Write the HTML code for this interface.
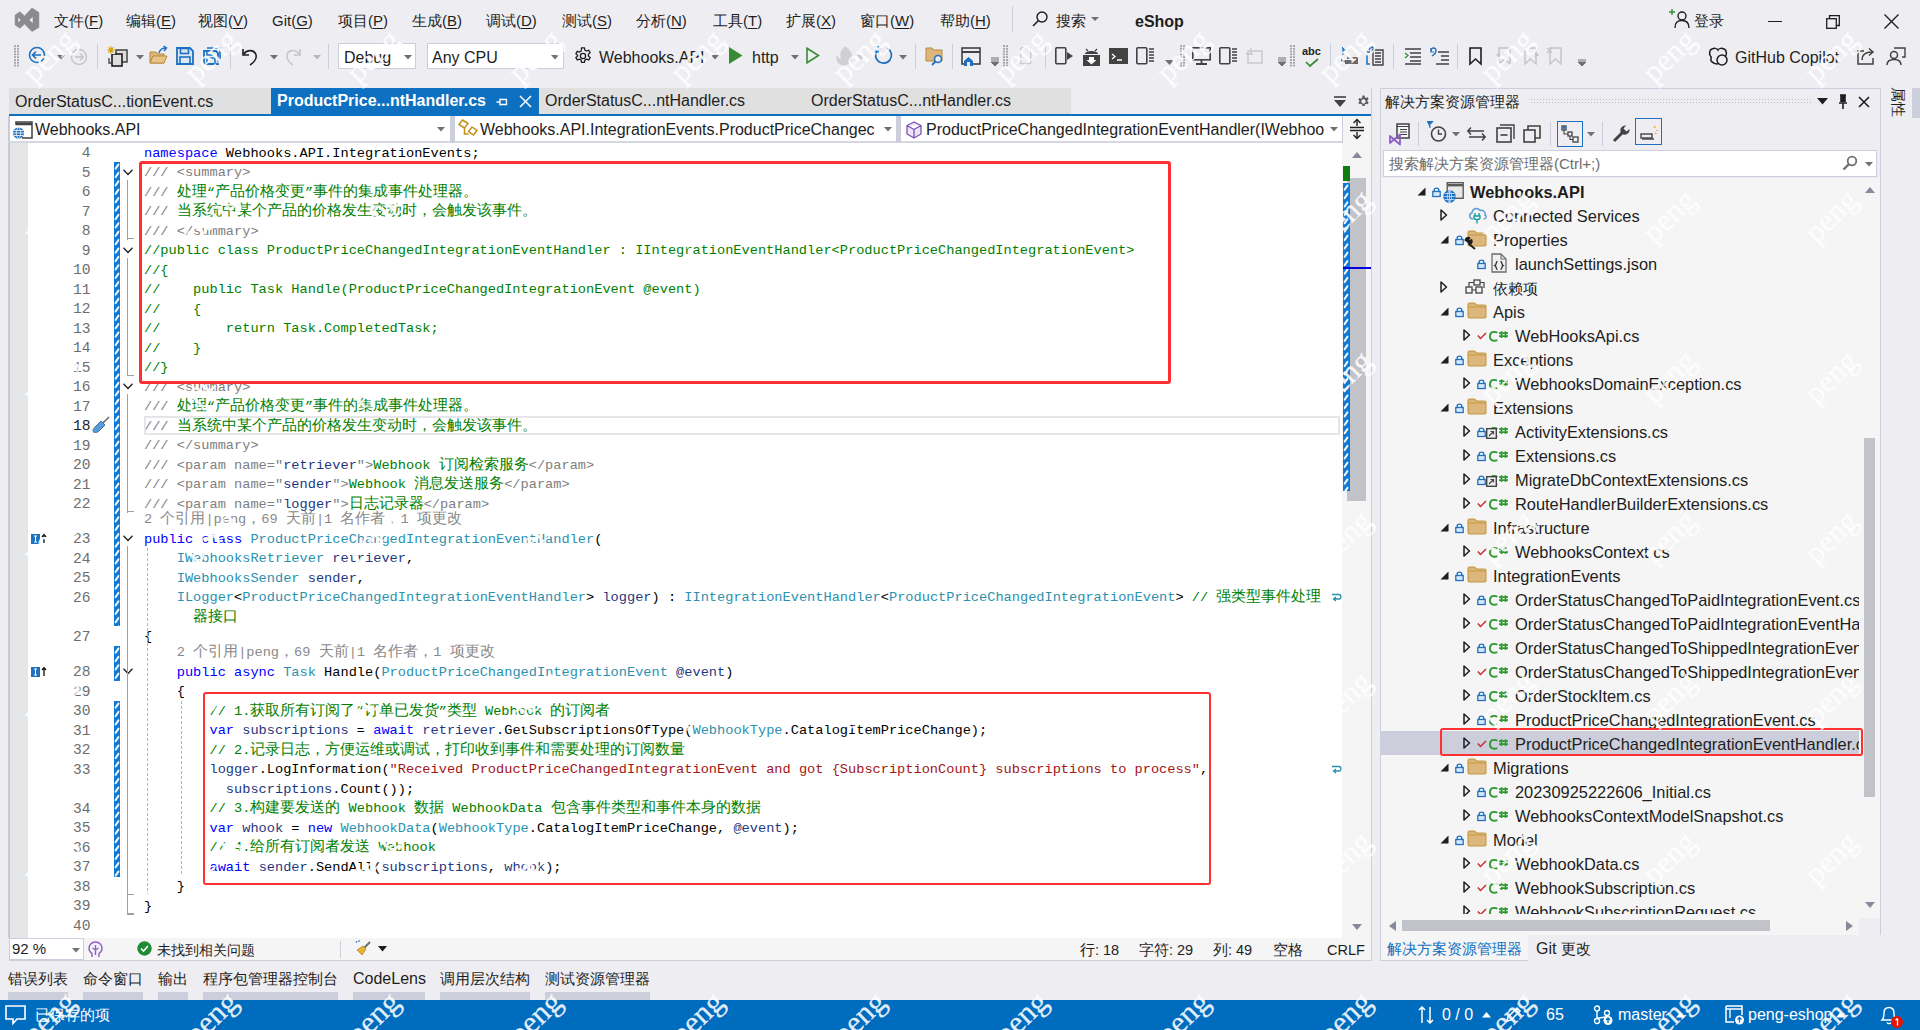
<!DOCTYPE html><html><head><meta charset="utf-8"><style>
html,body{margin:0;padding:0}
body{width:1920px;height:1030px;overflow:hidden;position:relative;background:#eeeef2;font-family:"Liberation Sans",sans-serif;color:#1e1e1e}
.code{position:absolute;white-space:pre;font-family:"Liberation Mono",monospace;font-size:13.65px;line-height:19.5px;color:#000}
.k{color:#0000ff}.t{color:#2b91af}.c{color:#008000}.g{color:#808080}.s{color:#a31515}.p{color:#1f377f}
.cl{position:absolute;white-space:pre;font-family:"Liberation Mono",monospace;font-size:13.65px;line-height:15px;color:#8a8a8a}
.ln{position:absolute;left:40px;width:50.5px;text-align:right;font-family:"Liberation Mono",monospace;font-size:14.6px;line-height:19.5px;color:#6e6e6e}
.tr{position:absolute;white-space:pre;font-size:16.4px;line-height:24px;color:#1e1e1e}
svg{position:absolute;overflow:visible}
</style></head><body>

<svg style="left:14px;top:7px" width="26" height="26"><path d="M1.1 8 L6 4.8 L10.6 9 L18 1 L24.9 5.5 V20.5 L18 24.6 L10.6 17 L6 21.2 L1.1 18 Z M4 10 L7 13 L4 16 Z M19 9.5 L15 13 L19 16.5 Z" fill="#8b8b8f" fill-rule="evenodd" stroke="#8b8b8f" stroke-width="0.6" stroke-linejoin="round"/></svg>
<div style="position:absolute;left:54px;top:10px;white-space:pre;font-size:15px;line-height:22px;color:#1e1e1e"><span style="font-size:15px">文件</span>(<span style="text-decoration:underline;text-underline-offset:2px">F</span>)</div>
<div style="position:absolute;left:126px;top:10px;white-space:pre;font-size:15px;line-height:22px;color:#1e1e1e"><span style="font-size:15px">编辑</span>(<span style="text-decoration:underline;text-underline-offset:2px">E</span>)</div>
<div style="position:absolute;left:198px;top:10px;white-space:pre;font-size:15px;line-height:22px;color:#1e1e1e"><span style="font-size:15px">视图</span>(<span style="text-decoration:underline;text-underline-offset:2px">V</span>)</div>
<div style="position:absolute;left:272px;top:10px;white-space:pre;font-size:15px;line-height:22px;color:#1e1e1e">Git(<span style="text-decoration:underline;text-underline-offset:2px">G</span>)</div>
<div style="position:absolute;left:338px;top:10px;white-space:pre;font-size:15px;line-height:22px;color:#1e1e1e"><span style="font-size:15px">项目</span>(<span style="text-decoration:underline;text-underline-offset:2px">P</span>)</div>
<div style="position:absolute;left:412px;top:10px;white-space:pre;font-size:15px;line-height:22px;color:#1e1e1e"><span style="font-size:15px">生成</span>(<span style="text-decoration:underline;text-underline-offset:2px">B</span>)</div>
<div style="position:absolute;left:486px;top:10px;white-space:pre;font-size:15px;line-height:22px;color:#1e1e1e"><span style="font-size:15px">调试</span>(<span style="text-decoration:underline;text-underline-offset:2px">D</span>)</div>
<div style="position:absolute;left:562px;top:10px;white-space:pre;font-size:15px;line-height:22px;color:#1e1e1e"><span style="font-size:15px">测试</span>(<span style="text-decoration:underline;text-underline-offset:2px">S</span>)</div>
<div style="position:absolute;left:636px;top:10px;white-space:pre;font-size:15px;line-height:22px;color:#1e1e1e"><span style="font-size:15px">分析</span>(<span style="text-decoration:underline;text-underline-offset:2px">N</span>)</div>
<div style="position:absolute;left:713px;top:10px;white-space:pre;font-size:15px;line-height:22px;color:#1e1e1e"><span style="font-size:15px">工具</span>(<span style="text-decoration:underline;text-underline-offset:2px">T</span>)</div>
<div style="position:absolute;left:786px;top:10px;white-space:pre;font-size:15px;line-height:22px;color:#1e1e1e"><span style="font-size:15px">扩展</span>(<span style="text-decoration:underline;text-underline-offset:2px">X</span>)</div>
<div style="position:absolute;left:860px;top:10px;white-space:pre;font-size:15px;line-height:22px;color:#1e1e1e"><span style="font-size:15px">窗口</span>(<span style="text-decoration:underline;text-underline-offset:2px">W</span>)</div>
<div style="position:absolute;left:940px;top:10px;white-space:pre;font-size:15px;line-height:22px;color:#1e1e1e"><span style="font-size:15px">帮助</span>(<span style="text-decoration:underline;text-underline-offset:2px">H</span>)</div>
<div style="position:absolute;left:1012px;top:6px;width:1px;height:26px;background:#cccedb"></div>
<svg style="left:1032px;top:11px" width="16" height="16"><circle cx="10" cy="6" r="5" fill="none" stroke="#1e1e1e" stroke-width="1.4"/><path d="M6.5 9.5 L1 15" stroke="#1e1e1e" stroke-width="1.6"/></svg>
<div style="position:absolute;left:1056px;top:10px;white-space:pre;font-size:15px;line-height:22px;color:#1e1e1e;"><span style="font-size:15px">搜索</span></div>
<svg style="left:1091px;top:17px" width="8" height="5"><path d="M0 0H8L4 4Z" fill="#717171"/></svg>
<div style="position:absolute;left:1135px;top:11px;white-space:pre;font-size:16px;line-height:22px;color:#1e1e1e;font-weight:bold">eShop</div>
<svg style="left:1669px;top:9px" width="22" height="20"><path d="M3 0V6M0 3H6" stroke="#388a34" stroke-width="1.4"/><circle cx="13" cy="7" r="4" fill="none" stroke="#1e1e1e" stroke-width="1.4"/><path d="M6 19 C6 13 9 11.5 13 11.5 C17 11.5 20 13 20 19" fill="none" stroke="#1e1e1e" stroke-width="1.4"/></svg>
<div style="position:absolute;left:1694px;top:10px;white-space:pre;font-size:15px;line-height:22px;color:#1e1e1e;"><span style="font-size:15px">登录</span></div>
<div style="position:absolute;left:1768px;top:21px;width:14px;height:1.3px;background:#1e1e1e"></div>
<svg style="left:1826px;top:15px" width="14" height="14"><rect x="0.7" y="3.7" width="9.6" height="9.6" fill="none" stroke="#1e1e1e" stroke-width="1.3"/><path d="M3.5 3.5V0.7H13.3V10.5H10.5" fill="none" stroke="#1e1e1e" stroke-width="1.3"/></svg>
<svg style="left:1884px;top:14px" width="15" height="15"><path d="M0.5 0.5L14.5 14.5M14.5 0.5L0.5 14.5" stroke="#1e1e1e" stroke-width="1.4"/></svg>
<div style="position:absolute;left:14px;top:45px;width:6px;height:22px;background-image:radial-gradient(circle at 1px 1px,#a0a0a8 0.7px,transparent 1px);background-size:3px 2.8px"></div>
<svg style="left:28px;top:46px" width="18" height="18"><circle cx="9" cy="9" r="7.5" fill="none" stroke="#1f70c1" stroke-width="1.6"/><path d="M13 9H5M8 5.5L4.5 9L8 12.5" fill="none" stroke="#1f70c1" stroke-width="1.6"/></svg>
<svg style="left:57px;top:55px" width="8" height="5"><path d="M0 0H8L4 4.5Z" fill="#717171"/></svg>
<svg style="left:70px;top:48px" width="18" height="18"><circle cx="9" cy="9" r="7.5" fill="none" stroke="#c4c4c8" stroke-width="1.4"/><path d="M5 9H13M10 5.5L13.5 9L10 12.5" fill="none" stroke="#c4c4c8" stroke-width="1.4"/></svg>
<div style="position:absolute;left:97px;top:44px;width:1px;height:25px;background:#cccedb"></div>
<svg style="left:107px;top:46px" width="22" height="21"><rect x="9" y="4" width="11" height="12" fill="#dedede" stroke="#424242" stroke-width="1.5"/><rect x="5" y="8" width="10" height="12" fill="#dedede" stroke="#1e1e1e" stroke-width="1.6"/><path d="M2 12V17H5" fill="none" stroke="#424242" stroke-width="1.3"/><rect x="0" y="0" width="8" height="8" fill="#eeeef2"/><path d="M4 0.3V7.7M0.3 4H7.7M1.4 1.4L6.6 6.6M6.6 1.4L1.4 6.6" stroke="#d9a400" stroke-width="1.2"/></svg>
<svg style="left:136px;top:55px" width="8" height="5"><path d="M0 0H8L4 4.5Z" fill="#717171"/></svg>
<svg style="left:149px;top:46px" width="19" height="19"><path d="M1 6H7L9 8H15V17H1Z" fill="#dcb67a" stroke="#b48a3e" stroke-width="1"/><path d="M1 17L4 10H18L15 17Z" fill="#e8c486" stroke="#b48a3e" stroke-width="1"/><path d="M10 7 C11 3 14 2 17 2M14.5 0L17.5 2L15 5" fill="none" stroke="#1f70c1" stroke-width="1.5"/></svg>
<svg style="left:176px;top:47px" width="18" height="18"><path d="M1 1H14L17 4V17H1Z" fill="#dce7f4" stroke="#1f70c1" stroke-width="1.8"/><rect x="4.5" y="1.5" width="8" height="5" fill="none" stroke="#1f70c1" stroke-width="1.6"/><rect x="4" y="10" width="10" height="7" fill="none" stroke="#1f70c1" stroke-width="1.6"/></svg>
<svg style="left:203px;top:47px" width="19" height="18"><path d="M4 1H17V14" fill="none" stroke="#1f70c1" stroke-width="1.6"/><path d="M1 4H13L15 6V17H1Z" fill="#dce7f4" stroke="#1f70c1" stroke-width="1.8"/><rect x="4" y="11" width="8" height="6" fill="none" stroke="#1f70c1" stroke-width="1.5"/><rect x="4" y="4.5" width="6" height="3.5" fill="none" stroke="#1f70c1" stroke-width="1.4"/></svg>
<div style="position:absolute;left:230px;top:44px;width:1px;height:25px;background:#cccedb"></div>
<svg style="left:240px;top:46px" width="18" height="20"><path d="M3 3V9H9" fill="none" stroke="#1e1e1e" stroke-width="1.6"/><path d="M3.5 8.5 C6 4 13 3 15.5 7.5 C17.5 11.5 14.5 16 10 19" fill="none" stroke="#1e1e1e" stroke-width="1.6"/></svg>
<svg style="left:270px;top:55px" width="8" height="5"><path d="M0 0H8L4 4.5Z" fill="#717171"/></svg>
<svg style="left:285px;top:46px" width="18" height="20"><path d="M15 3V9H9" fill="none" stroke="#c4c4c8" stroke-width="1.5"/><path d="M14.5 8.5 C12 4 5 3 2.5 7.5 C0.5 11.5 3.5 16 8 19" fill="none" stroke="#c4c4c8" stroke-width="1.5"/></svg>
<svg style="left:313px;top:55px" width="8" height="5"><path d="M0 0H8L4 4.5Z" fill="#b8b8bc"/></svg>
<div style="position:absolute;left:328px;top:44px;width:1px;height:25px;background:#cccedb"></div>
<div style="position:absolute;left:338px;top:43px;width:78px;height:26px;background:#fff;border:1px solid #cccedb;box-sizing:border-box"></div>
<div style="position:absolute;left:344px;top:46.5px;white-space:pre;font-size:16px;line-height:22px;color:#1e1e1e;">Debug</div>
<svg style="left:404px;top:55px" width="8" height="5"><path d="M0 0H8L4 4.5Z" fill="#717171"/></svg>
<div style="position:absolute;left:427px;top:43px;width:137px;height:26px;background:#fff;border:1px solid #cccedb;box-sizing:border-box"></div>
<div style="position:absolute;left:432px;top:46.5px;white-space:pre;font-size:16px;line-height:22px;color:#1e1e1e;">Any CPU</div>
<svg style="left:551px;top:55px" width="8" height="5"><path d="M0 0H8L4 4.5Z" fill="#717171"/></svg>
<svg style="left:574px;top:47px" width="18" height="18" viewBox="0 0 18 18"><path d="M7.6 0.8h2.8l0.5 2.3 1.6 0.9 2.2-0.8 1.4 2.4-1.7 1.6v1.7l1.7 1.6-1.4 2.4-2.2-0.8-1.6 0.9-0.5 2.3H7.6l-0.5-2.3-1.6-0.9-2.2 0.8-1.4-2.4 1.7-1.6V8.3L1.9 6.7l1.4-2.4 2.2 0.8 1.6-0.9z" fill="none" stroke="#1e1e1e" stroke-width="1.3"/><circle cx="9" cy="9" r="2.6" fill="none" stroke="#1e1e1e" stroke-width="1.3"/></svg>
<div style="position:absolute;left:599px;top:46.5px;white-space:pre;font-size:16px;line-height:22px;color:#1e1e1e;">Webhooks.API</div>
<svg style="left:711px;top:55px" width="8" height="5"><path d="M0 0H8L4 4.5Z" fill="#717171"/></svg>
<svg style="left:729px;top:47px" width="14" height="17"><path d="M0 0L13.5 8.5L0 17Z" fill="#388a34"/></svg>
<div style="position:absolute;left:752px;top:46.5px;white-space:pre;font-size:16px;line-height:22px;color:#1e1e1e;">http</div>
<svg style="left:791px;top:55px" width="8" height="5"><path d="M0 0H8L4 4.5Z" fill="#717171"/></svg>
<svg style="left:806px;top:47px" width="14" height="17"><path d="M1 1.2L12.5 8.5L1 15.8Z" fill="none" stroke="#388a34" stroke-width="1.6"/></svg>
<svg style="left:833px;top:45px" width="24" height="22"><path d="M12 1 C16 4 20 8 19 14 C18 19 13 21 9 20 C4 19 2 14 4 10 C5 13 7 14 8 13 C6 8 9 4 12 1Z" fill="#d0d0d4"/></svg>
<svg style="left:857px;top:55px" width="8" height="5"><path d="M0 0H8L4 4.5Z" fill="#c4c4c8"/></svg>
<svg style="left:873px;top:45px" width="20" height="20"><path d="M6 3.5 A8 8 0 1 0 14.5 3.2" fill="none" stroke="#1f70c1" stroke-width="1.7"/><path d="M3 1L7.5 3.5L4.5 7.5" fill="none" stroke="#1f70c1" stroke-width="1.7"/></svg>
<svg style="left:899px;top:55px" width="8" height="5"><path d="M0 0H8L4 4.5Z" fill="#717171"/></svg>
<div style="position:absolute;left:915px;top:44px;width:1px;height:25px;background:#cccedb"></div>
<svg style="left:925px;top:46px" width="20" height="20"><path d="M1 2H7L9 4H17V15H1Z" fill="#dcb67a" stroke="#b48a3e" stroke-width="1"/><circle cx="13" cy="13" r="3.5" fill="#eeeef2" stroke="#1f70c1" stroke-width="1.6"/><path d="M10.5 15.5L7 19" stroke="#1f70c1" stroke-width="1.8"/></svg>
<div style="position:absolute;left:952px;top:44px;width:1px;height:25px;background:#cccedb"></div>
<svg style="left:961px;top:47px" width="20" height="20"><rect x="1" y="1" width="18" height="16" fill="none" stroke="#424242" stroke-width="1.6"/><path d="M1 5H19" stroke="#424242" stroke-width="2"/><path d="M3 14L7.5 10L12 14V19H3Z" fill="#1f70c1"/><rect x="6" y="15" width="3" height="4" fill="#eeeef2"/></svg>
<svg style="left:990px;top:58px" width="10" height="8"><path d="M1 0H9M1 2H9M1 4H9L5 8Z" stroke="#717171" fill="#717171" stroke-width="1"/></svg>
<div style="position:absolute;left:1003px;top:45px;width:6px;height:22px;background-image:radial-gradient(circle at 1px 1px,#a0a0a8 0.7px,transparent 1px);background-size:3px 2.8px"></div>
<svg style="left:1020px;top:47px" width="12" height="18"><rect x="0.7" y="0.7" width="10" height="16" rx="1" fill="none" stroke="#c8c8cc" stroke-width="1.3"/></svg>
<div style="position:absolute;left:1045px;top:44px;width:1px;height:25px;background:#cccedb"></div>
<svg style="left:1055px;top:47px" width="18" height="18"><rect x="0.8" y="0.8" width="10" height="16" rx="1" fill="none" stroke="#424242" stroke-width="1.6"/><path d="M12 5L18 9L12 13Z" fill="#424242"/></svg>
<svg style="left:1082px;top:46px" width="19" height="20"><path d="M4 3L6 5M15 3L13 5" stroke="#424242" stroke-width="1.2"/><path d="M3 8 C3 4 16 4 16 8Z" fill="#424242"/><rect x="1" y="9" width="17" height="11" fill="#424242"/><path d="M7 11H12V14H14.5L9.5 18.5L4.5 14H7Z" fill="#fff"/></svg>
<svg style="left:1109px;top:48px" width="19" height="16"><rect x="0" y="0" width="19" height="16" fill="#424242"/><path d="M3 6L6 8.5L3 11M8 12H13" stroke="#fff" stroke-width="1.3" fill="none"/></svg>
<svg style="left:1136px;top:47px" width="19" height="18"><rect x="0.8" y="0.8" width="10" height="16" rx="1" fill="none" stroke="#424242" stroke-width="1.6"/><path d="M13 2H18M13 5H18M13 8H18M13 11H18M13 14H18" stroke="#424242" stroke-width="1.3"/></svg>
<svg style="left:1165px;top:60px" width="10" height="8"><path d="M0 0H9L4.5 5Z" fill="#717171"/></svg>
<div style="position:absolute;left:1180px;top:45px;width:6px;height:22px;background-image:radial-gradient(circle at 1px 1px,#a0a0a8 0.7px,transparent 1px);background-size:3px 2.8px"></div>
<svg style="left:1192px;top:47px" width="19" height="18"><rect x="0.8" y="0.8" width="17.4" height="12" fill="none" stroke="#424242" stroke-width="1.6"/><path d="M9.5 13V16M4 17H15" stroke="#424242" stroke-width="1.8"/></svg>
<svg style="left:1219px;top:47px" width="19" height="18"><rect x="0.8" y="0.8" width="10" height="16" rx="1" fill="none" stroke="#424242" stroke-width="1.6"/><path d="M13 2H18M13 5H18M13 8H18M13 11H18M13 14H18" stroke="#424242" stroke-width="1.3"/></svg>
<svg style="left:1245px;top:47px" width="20" height="18"><rect x="3" y="4" width="14" height="12" fill="none" stroke="#c8c8cc" stroke-width="1.4"/><path d="M1 7H8M6 1V6" stroke="#c8c8cc" stroke-width="1.4"/></svg>
<svg style="left:1277px;top:58px" width="10" height="8"><path d="M1 0H9M1 2H9M1 4H9L5 8Z" stroke="#717171" fill="#717171" stroke-width="1"/></svg>
<div style="position:absolute;left:1290px;top:45px;width:6px;height:22px;background-image:radial-gradient(circle at 1px 1px,#a0a0a8 0.7px,transparent 1px);background-size:3px 2.8px"></div>
<div style="position:absolute;left:1302px;top:44px;white-space:pre;font-size:11px;line-height:14px;color:#1e1e1e;font-weight:bold">abc</div>
<svg style="left:1305px;top:58px" width="14" height="9"><path d="M1 4L5 8L13 1" fill="none" stroke="#388a34" stroke-width="1.7"/></svg>
<div style="position:absolute;left:1330px;top:44px;width:1px;height:25px;background:#cccedb"></div>
<svg style="left:1338px;top:46px" width="21" height="20"><path d="M4 1L7.5 5H5V9" fill="#1f70c1" stroke="#1f70c1" stroke-width="1"/><path d="M4 11V15H19V12H9" fill="none" stroke="#424242" stroke-width="1.6"/><path d="M7 17H20" stroke="#424242" stroke-width="1.6"/></svg>
<svg style="left:1365px;top:46px" width="20" height="20"><path d="M5 6H2V18H5" fill="none" stroke="#1f70c1" stroke-width="1.5"/><path d="M4 4 C5 1 8 1 9 3M7 0.5L9.5 3L6.5 4.5" fill="none" stroke="#1f70c1" stroke-width="1.3"/><path d="M8 4H18V19H8Z M10 7H16M10 10H16M10 13H16M10 16H16" fill="none" stroke="#424242" stroke-width="1.4"/></svg>
<div style="position:absolute;left:1393px;top:44px;width:1px;height:25px;background:#cccedb"></div>
<svg style="left:1404px;top:47px" width="18" height="18"><path d="M1 2H17M6 6H17M6 10H17M6 14H17M1 17H17" stroke="#424242" stroke-width="1.3"/><path d="M1 6L4 8.5L1 11" fill="none" stroke="#388a34" stroke-width="1.3"/></svg>
<svg style="left:1430px;top:46px" width="20" height="19"><path d="M1 5 C1 1 6 1 6 5 C6 8 3 9 2 10" fill="none" stroke="#1f70c1" stroke-width="1.4"/><path d="M1 2V6H4" fill="none" stroke="#1f70c1" stroke-width="1.2"/><path d="M8 6H19M11 10H19M11 14H19M6 18H19" stroke="#424242" stroke-width="1.3"/></svg>
<div style="position:absolute;left:1457px;top:44px;width:1px;height:25px;background:#cccedb"></div>
<svg style="left:1469px;top:47px" width="13" height="18"><path d="M1 1H12V17L6.5 12L1 17Z" fill="none" stroke="#1e1e1e" stroke-width="1.6"/></svg>
<svg style="left:1496px;top:47px" width="15" height="18"><path d="M3 1H14V17L8.5 12L3 17Z" fill="none" stroke="#c4c4c8" stroke-width="1.4"/><path d="M0 8L4 5V11Z" fill="#c4c4c8"/></svg>
<svg style="left:1524px;top:47px" width="15" height="18"><path d="M1 1H12V17L6.5 12L1 17Z" fill="none" stroke="#c4c4c8" stroke-width="1.4"/><path d="M15 8L11 5V11Z" fill="#c4c4c8"/></svg>
<svg style="left:1547px;top:47px" width="15" height="18"><path d="M3 1H14V17L8.5 12L3 17Z" fill="none" stroke="#c4c4c8" stroke-width="1.4"/><path d="M0 1L5 6M5 1L0 6" stroke="#c4c4c8" stroke-width="1.3"/></svg>
<svg style="left:1577px;top:60px" width="10" height="8"><path d="M1 0H9M1 2H9L5 6Z" stroke="#717171" fill="#717171" stroke-width="1"/></svg>
<svg style="left:1708px;top:46px" width="20" height="20"><path d="M3 10 C1 10 1 4 4 3 C6 2 9 2 10 4 C11 2 14 2 16 3 C19 4 19 10 17 10" fill="none" stroke="#1e1e1e" stroke-width="1.5"/><path d="M3 10V15 C6 18 10 18 10 18" fill="none" stroke="#1e1e1e" stroke-width="1.5"/><circle cx="14" cy="14" r="5" fill="#eeeef2" stroke="#1e1e1e" stroke-width="1.5"/></svg>
<div style="position:absolute;left:1735px;top:46.5px;white-space:pre;font-size:16px;line-height:22px;color:#1e1e1e;">GitHub Copilot</div>
<svg style="left:1857px;top:47px" width="19" height="18"><path d="M7 4H1V17H16V11" fill="none" stroke="#424242" stroke-width="1.5"/><path d="M5 13 C5 7 9 5 15 5M12 1.5L16 5L12 8.5" fill="none" stroke="#424242" stroke-width="1.5"/></svg>
<svg style="left:1886px;top:46px" width="20" height="20"><path d="M8 2H19V11H16" fill="none" stroke="#424242" stroke-width="1.4"/><circle cx="8" cy="9" r="3.5" fill="none" stroke="#424242" stroke-width="1.5"/><path d="M1 19 C1 15 4 13.5 8 13.5 C12 13.5 15 15 15 19" fill="none" stroke="#424242" stroke-width="1.5"/></svg>
<div style="position:absolute;left:9px;top:88px;width:1062px;height:26px;background:#e0e0e0"></div>
<div style="position:absolute;left:271px;top:88px;width:268px;height:26px;background:#0e70c0"></div>
<div style="position:absolute;left:15px;top:90.5px;white-space:pre;font-size:16px;line-height:22px;color:#1e1e1e;">OrderStatusC...tionEvent.cs</div>
<div style="position:absolute;left:277px;top:90px;white-space:pre;font-size:16px;line-height:22px;color:#fff;font-weight:bold">ProductPrice...ntHandler.cs</div>
<svg style="left:496px;top:96px" width="12" height="12"><path d="M0.5 6H4M4 2.5V9.5M4 3.5H10.5V8.5H4" fill="none" stroke="#fff" stroke-width="1.3"/></svg>
<svg style="left:519px;top:95px" width="13" height="13"><path d="M1 1L12 12M12 1L1 12" stroke="#fff" stroke-width="1.5"/></svg>
<div style="position:absolute;left:545px;top:90px;white-space:pre;font-size:16px;line-height:22px;color:#1e1e1e;">OrderStatusC...ntHandler.cs</div>
<div style="position:absolute;left:811px;top:90px;white-space:pre;font-size:16px;line-height:22px;color:#1e1e1e;">OrderStatusC...ntHandler.cs</div>
<svg style="left:1334px;top:96px" width="12" height="12"><path d="M0 1H12" stroke="#424242" stroke-width="1.6"/><path d="M0 4H12L6 11Z" fill="#424242"/></svg>
<svg style="left:1357px;top:95px" width="13" height="13" viewBox="0 0 18 18"><path d="M7.6 0.8h2.8l0.5 2.3 1.6 0.9 2.2-0.8 1.4 2.4-1.7 1.6v1.7l1.7 1.6-1.4 2.4-2.2-0.8-1.6 0.9-0.5 2.3H7.6l-0.5-2.3-1.6-0.9-2.2 0.8-1.4-2.4 1.7-1.6V8.3L1.9 6.7l1.4-2.4 2.2 0.8 1.6-0.9z" fill="#5a5a5a"/><circle cx="9" cy="9" r="3" fill="#eeeef2"/></svg>
<div style="position:absolute;left:9px;top:114px;width:1362px;height:2px;background:#0e70c0"></div>
<div style="position:absolute;left:9px;top:116px;width:1362px;height:27px;background:#fff"></div>
<div style="position:absolute;left:8px;top:116px;width:1.5px;height:27px;background:#c8cad8"></div>
<div style="position:absolute;left:9px;top:141px;width:1362px;height:2px;background:#d6d7e0"></div>
<div style="position:absolute;left:450px;top:116px;width:5px;height:27px;background:#cccedb"></div>
<div style="position:absolute;left:896px;top:116px;width:5px;height:27px;background:#cccedb"></div>
<div style="position:absolute;left:1342px;top:116px;width:29px;height:27px;background:#f5f5f5;border-left:1px solid #cccedb;box-sizing:border-box"></div>
<svg style="left:12px;top:120px" width="22" height="20"><path d="M4 5V2H20V18H10" fill="none" stroke="#424242" stroke-width="1.5"/><path d="M4 4H20" stroke="#424242" stroke-width="2.5"/><circle cx="6.5" cy="13" r="5.5" fill="#1f70c1"/><path d="M1 13H12M6.5 7.5 C3.5 10 3.5 16 6.5 18.5M6.5 7.5 C9.5 10 9.5 16 6.5 18.5M2 10.5H11M2 15.5H11" fill="none" stroke="#fff" stroke-width="0.8"/></svg>
<div style="position:absolute;left:35px;top:119px;white-space:pre;font-size:16px;line-height:22px;color:#1e1e1e;">Webhooks.API</div>
<svg style="left:437px;top:127px" width="8" height="5"><path d="M0 0H8L4 4.5Z" fill="#717171"/></svg>
<svg style="left:458px;top:119px" width="20" height="20"><path d="M4.5 1L10 4.5L6.5 9L1 5.5Z M14 8L19 11.5L15.5 16L10.5 12.5Z" fill="none" stroke="#c19016" stroke-width="1.5"/><path d="M6.5 9V15H10.5" fill="none" stroke="#c19016" stroke-width="1.5"/></svg>
<div style="position:absolute;left:480px;top:119px;white-space:pre;font-size:16px;line-height:22px;color:#1e1e1e;">Webhooks.API.IntegrationEvents.ProductPriceChangec</div>
<svg style="left:884px;top:127px" width="8" height="5"><path d="M0 0H8L4 4.5Z" fill="#717171"/></svg>
<svg style="left:906px;top:121px" width="16" height="18"><path d="M8 1L15 4.5V13L8 17L1 13V4.5Z M1 4.5L8 8.5L15 4.5M8 8.5V17" fill="#ede4f7" stroke="#7b53b5" stroke-width="1.3" stroke-linejoin="round"/></svg>
<div style="position:absolute;left:926px;top:119px;width:398px;overflow:hidden;white-space:pre;font-size:16px;line-height:22px">ProductPriceChangedIntegrationEventHandler(IWebhooksRetriever</div>
<svg style="left:1330px;top:127px" width="8" height="5"><path d="M0 0H8L4 4.5Z" fill="#717171"/></svg>
<svg style="left:1350px;top:119px" width="14" height="20"><path d="M0 8.5H14M0 11.5H14" stroke="#1e1e1e" stroke-width="1.6"/><path d="M7 1V7M7 13V19" stroke="#1e1e1e" stroke-width="1.4"/><path d="M3.5 4L7 0.5L10.5 4M3.5 16L7 19.5L10.5 16" fill="none" stroke="#1e1e1e" stroke-width="1.4"/></svg>
<div style="position:absolute;left:9px;top:143px;width:1334px;height:795px;background:#fff"></div>
<div style="position:absolute;left:9px;top:143px;width:19px;height:795px;background:#e4e6e7"></div>
<div style="position:absolute;left:8px;top:143px;width:1.5px;height:795px;background:#c8cad8"></div>
<div style="position:absolute;left:1371px;top:88px;width:1px;height:873px;background:#cccedb"></div>
<div style="position:absolute;left:1342px;top:143px;width:29px;height:795px;background:#f5f5f5"></div>
<svg style="left:1352px;top:152px" width="10" height="6"><path d="M0 6L5 0L10 6Z" fill="#868999"/></svg>
<svg style="left:1352px;top:924px" width="10" height="6"><path d="M0 0L5 6L10 0Z" fill="#868999"/></svg>
<div style="position:absolute;left:1347px;top:178px;width:19px;height:322.5px;background:#c2c3c9"></div>
<div style="position:absolute;left:1343px;top:166px;width:7px;height:15px;background:#107c10"></div>
<svg width="0" height="0" style="position:absolute;left:0;top:0"><defs><pattern id="st" width="7" height="8.4" patternUnits="userSpaceOnUse"><rect width="7" height="8.4" fill="#0e78d4"/><path d="M1.6 6.6L4.5 2.4" stroke="#fff" stroke-width="1.9" stroke-linecap="round"/></pattern></defs></svg>
<svg style="left:1343px;top:183px" width="7" height="308"><rect width="7" height="308" fill="url(#st)"/></svg>
<div style="position:absolute;left:1343px;top:267px;width:28px;height:2px;background:#0000e0"></div>
<div class="ln" style="top:144.00px;">4</div>
<div class="code" style="left:144px;top:143.50px"><span class="k">namespace</span> Webhooks.API.IntegrationEvents;</div>
<div class="ln" style="top:163.50px;">5</div>
<div class="code" style="left:144px;top:163.00px"><span class="g">/// &lt;summary&gt;</span></div>
<div class="ln" style="top:183.00px;">6</div>
<div class="code" style="left:144px;top:182.50px"><span class="g">/// </span><span class="c"><span style="font-size:14.85px">处理</span>“<span style="font-size:14.85px">产品价格变更</span>”<span style="font-size:14.85px">事件的集成事件处理器。</span></span></div>
<div class="ln" style="top:202.50px;">7</div>
<div class="code" style="left:144px;top:202.00px"><span class="g">/// </span><span class="c"><span style="font-size:14.85px">当系统中某个产品的价格发生变动时，会触发该事件。</span></span></div>
<div class="ln" style="top:222.00px;">8</div>
<div class="code" style="left:144px;top:221.50px"><span class="g">/// &lt;/summary&gt;</span></div>
<div class="ln" style="top:241.50px;">9</div>
<div class="code" style="left:144px;top:241.00px"><span class="c">//public class ProductPriceChangedIntegrationEventHandler : IIntegrationEventHandler&lt;ProductPriceChangedIntegrationEvent&gt;</span></div>
<div class="ln" style="top:261.00px;">10</div>
<div class="code" style="left:144px;top:260.50px"><span class="c">//{</span></div>
<div class="ln" style="top:280.50px;">11</div>
<div class="code" style="left:144px;top:280.00px"><span class="c">//    public Task Handle(ProductPriceChangedIntegrationEvent @event)</span></div>
<div class="ln" style="top:300.00px;">12</div>
<div class="code" style="left:144px;top:299.50px"><span class="c">//    {</span></div>
<div class="ln" style="top:319.50px;">13</div>
<div class="code" style="left:144px;top:319.00px"><span class="c">//        return Task.CompletedTask;</span></div>
<div class="ln" style="top:339.00px;">14</div>
<div class="code" style="left:144px;top:338.50px"><span class="c">//    }</span></div>
<div class="ln" style="top:358.50px;">15</div>
<div class="code" style="left:144px;top:358.00px"><span class="c">//}</span></div>
<div class="ln" style="top:378.00px;">16</div>
<div class="code" style="left:144px;top:377.50px"><span class="g">/// &lt;summary&gt;</span></div>
<div class="ln" style="top:397.50px;">17</div>
<div class="code" style="left:144px;top:397.00px"><span class="g">/// </span><span class="c"><span style="font-size:14.85px">处理</span>“<span style="font-size:14.85px">产品价格变更</span>”<span style="font-size:14.85px">事件的集成事件处理器。</span></span></div>
<div class="ln" style="top:417.00px;color:#1e1e1e;">18</div>
<div class="code" style="left:144px;top:416.50px"><span class="g">/// </span><span class="c"><span style="font-size:14.85px">当系统中某个产品的价格发生变动时，会触发该事件。</span></span></div>
<div class="ln" style="top:436.50px;">19</div>
<div class="code" style="left:144px;top:436.00px"><span class="g">/// &lt;/summary&gt;</span></div>
<div class="ln" style="top:456.00px;">20</div>
<div class="code" style="left:144px;top:455.50px"><span class="g">/// &lt;param name=&quot;</span><span class="p">retriever</span><span class="g">&quot;&gt;</span><span class="c">Webhook <span style="font-size:14.85px">订阅检索服务</span></span><span class="g">&lt;/param&gt;</span></div>
<div class="ln" style="top:475.50px;">21</div>
<div class="code" style="left:144px;top:475.00px"><span class="g">/// &lt;param name=&quot;</span><span class="p">sender</span><span class="g">&quot;&gt;</span><span class="c">Webhook <span style="font-size:14.85px">消息发送服务</span></span><span class="g">&lt;/param&gt;</span></div>
<div class="ln" style="top:495.00px;">22</div>
<div class="code" style="left:144px;top:494.50px"><span class="g">/// &lt;param name=&quot;</span><span class="p">logger</span><span class="g">&quot;&gt;</span><span class="c"><span style="font-size:14.85px">日志记录器</span></span><span class="g">&lt;/param&gt;</span></div>
<div class="cl" style="left:144.00px;top:512.00px">2 <span style="font-size:14.5px">个引用</span>|peng<span style="font-size:14.5px">，</span>69 <span style="font-size:14.5px">天前</span>|1 <span style="font-size:14.5px">名作者，</span>1 <span style="font-size:14.5px">项更改</span></div>
<div class="ln" style="top:530.30px;">23</div>
<div class="code" style="left:144px;top:529.80px"><span class="k">public class</span> <span class="t">ProductPriceChangedIntegrationEventHandler</span>(</div>
<div class="ln" style="top:549.80px;">24</div>
<div class="code" style="left:144px;top:549.30px">    <span class="t">IWebhooksRetriever</span> <span class="p">retriever</span>,</div>
<div class="ln" style="top:569.30px;">25</div>
<div class="code" style="left:144px;top:568.80px">    <span class="t">IWebhooksSender</span> <span class="p">sender</span>,</div>
<div class="ln" style="top:588.80px;">26</div>
<div class="code" style="left:144px;top:588.30px">    <span class="t">ILogger</span>&lt;<span class="t">ProductPriceChangedIntegrationEventHandler</span>&gt; <span class="p">logger</span>) : <span class="t">IIntegrationEventHandler</span>&lt;<span class="t">ProductPriceChangedIntegrationEvent</span>&gt; <span class="c">// <span style="font-size:14.85px">强类型事件处理</span></span></div>
<div class="code" style="left:144px;top:607.80px">      <span class="c"><span style="font-size:14.85px">器接口</span></span></div>
<div class="ln" style="top:627.80px;">27</div>
<div class="code" style="left:144px;top:627.30px">{</div>
<div class="cl" style="left:176.76px;top:644.80px">2 <span style="font-size:14.5px">个引用</span>|peng<span style="font-size:14.5px">，</span>69 <span style="font-size:14.5px">天前</span>|1 <span style="font-size:14.5px">名作者，</span>1 <span style="font-size:14.5px">项更改</span></div>
<div class="ln" style="top:663.10px;">28</div>
<div class="code" style="left:144px;top:662.60px">    <span class="k">public async</span> <span class="t">Task</span> Handle(<span class="t">ProductPriceChangedIntegrationEvent</span> <span class="p">@event</span>)</div>
<div class="ln" style="top:682.60px;">29</div>
<div class="code" style="left:144px;top:682.10px">    {</div>
<div class="ln" style="top:702.10px;">30</div>
<div class="code" style="left:144px;top:701.60px">        <span class="c">// 1.<span style="font-size:14.85px">获取所有订阅了</span>“<span style="font-size:14.85px">订单已发货</span>”<span style="font-size:14.85px">类型</span> Webhook <span style="font-size:14.85px">的订阅者</span></span></div>
<div class="ln" style="top:721.60px;">31</div>
<div class="code" style="left:144px;top:721.10px">        <span class="k">var</span> <span class="p">subscriptions</span> = <span class="k">await</span> <span class="p">retriever</span>.GetSubscriptionsOfType(<span class="t">WebhookType</span>.CatalogItemPriceChange);</div>
<div class="ln" style="top:741.10px;">32</div>
<div class="code" style="left:144px;top:740.60px">        <span class="c">// 2.<span style="font-size:14.85px">记录日志，方便运维或调试，打印收到事件和需要处理的订阅数量</span></span></div>
<div class="ln" style="top:760.60px;">33</div>
<div class="code" style="left:144px;top:760.10px">        <span class="p">logger</span>.LogInformation(<span class="s">&quot;Received ProductPriceChangedIntegrationEvent and got {SubscriptionCount} subscriptions to process&quot;</span>,</div>
<div class="code" style="left:144px;top:779.60px">          <span class="p">subscriptions</span>.Count());</div>
<div class="ln" style="top:799.60px;">34</div>
<div class="code" style="left:144px;top:799.10px">        <span class="c">// 3.<span style="font-size:14.85px">构建要发送的</span> Webhook <span style="font-size:14.85px">数据</span> WebhookData <span style="font-size:14.85px">包含事件类型和事件本身的数据</span></span></div>
<div class="ln" style="top:819.10px;">35</div>
<div class="code" style="left:144px;top:818.60px">        <span class="k">var</span> <span class="p">whook</span> = <span class="k">new</span> <span class="t">WebhookData</span>(<span class="t">WebhookType</span>.CatalogItemPriceChange, <span class="p">@event</span>);</div>
<div class="ln" style="top:838.60px;">36</div>
<div class="code" style="left:144px;top:838.10px">        <span class="c">// 4.<span style="font-size:14.85px">给所有订阅者发送</span> Webhook</span></div>
<div class="ln" style="top:858.10px;">37</div>
<div class="code" style="left:144px;top:857.60px">        <span class="k">await</span> <span class="p">sender</span>.SendAll(<span class="p">subscriptions</span>, <span class="p">whook</span>);</div>
<div class="ln" style="top:877.60px;">38</div>
<div class="code" style="left:144px;top:877.10px">    }</div>
<div class="ln" style="top:897.10px;">39</div>
<div class="code" style="left:144px;top:896.60px">}</div>
<div class="ln" style="top:916.60px;">40</div>
<div class="code" style="left:144px;top:916.10px"></div>
<div style="position:absolute;left:144px;top:415.5px;width:1196px;height:19.5px;border:2px solid #e6e6ea;box-sizing:border-box"></div>
<svg style="left:114px;top:162px" width="6" height="464"><rect width="6" height="464" fill="url(#st)"/></svg>
<svg style="left:114px;top:646px" width="6" height="35"><rect width="6" height="35" fill="url(#st)"/></svg>
<svg style="left:114px;top:700.5px" width="6" height="176"><rect width="6" height="176" fill="url(#st)"/></svg>
<svg style="left:123px;top:168.5px" width="10" height="7"><path d="M0.5 0.8L5 5.5L9.5 0.8" fill="none" stroke="#1e1e1e" stroke-width="1.3"/></svg>
<svg style="left:123px;top:246.5px" width="10" height="7"><path d="M0.5 0.8L5 5.5L9.5 0.8" fill="none" stroke="#1e1e1e" stroke-width="1.3"/></svg>
<svg style="left:123px;top:383.0px" width="10" height="7"><path d="M0.5 0.8L5 5.5L9.5 0.8" fill="none" stroke="#1e1e1e" stroke-width="1.3"/></svg>
<svg style="left:123px;top:535.3px" width="10" height="7"><path d="M0.5 0.8L5 5.5L9.5 0.8" fill="none" stroke="#1e1e1e" stroke-width="1.3"/></svg>
<svg style="left:123px;top:668.1px" width="10" height="7"><path d="M0.5 0.8L5 5.5L9.5 0.8" fill="none" stroke="#1e1e1e" stroke-width="1.3"/></svg>
<div style="position:absolute;left:127px;top:179.5px;width:1.3px;height:60.0px;background:#a0a0a0"></div>
<div style="position:absolute;left:127px;top:238.2px;width:7px;height:1.3px;background:#a0a0a0"></div>
<div style="position:absolute;left:127px;top:257.5px;width:1.3px;height:118.5px;background:#a0a0a0"></div>
<div style="position:absolute;left:127px;top:374.7px;width:7px;height:1.3px;background:#a0a0a0"></div>
<div style="position:absolute;left:127px;top:394.0px;width:1.3px;height:118.5px;background:#a0a0a0"></div>
<div style="position:absolute;left:127px;top:511.2px;width:7px;height:1.3px;background:#a0a0a0"></div>
<div style="position:absolute;left:127px;top:546.3px;width:1.3px;height:368.29999999999995px;background:#a0a0a0"></div>
<div style="position:absolute;left:127px;top:913.3px;width:7px;height:1.3px;background:#a0a0a0"></div>
<div style="position:absolute;left:127px;top:893.8px;width:7px;height:1.3px;background:#a0a0a0"></div>
<div style="position:absolute;left:147px;top:548.3px;width:1px;height:345.8px;background:repeating-linear-gradient(#b4b4b4 0 3px,transparent 3px 5px)"></div>
<div style="position:absolute;left:181px;top:700.6px;width:1px;height:175.5px;background:repeating-linear-gradient(#b4b4b4 0 3px,transparent 3px 5px)"></div>
<svg style="left:1331px;top:592.3px" width="11" height="10"><path d="M1 2.5H8 C10.5 2.5 10.5 7 8 7H3M5 5L2.5 7L5 9" fill="none" stroke="#2b91af" stroke-width="1.3"/></svg>
<svg style="left:1331px;top:764.1px" width="11" height="10"><path d="M1 2.5H8 C10.5 2.5 10.5 7 8 7H3M5 5L2.5 7L5 9" fill="none" stroke="#2b91af" stroke-width="1.3"/></svg>
<svg style="left:31px;top:532.8px" width="18" height="12"><rect x="0" y="1" width="9" height="10" fill="#1f70c1"/><path d="M3 3H6M4.5 3V9M3 9H6" stroke="#fff" stroke-width="1"/><path d="M13 2V10M11 4L13 1.5L15 4" fill="none" stroke="#1e1e1e" stroke-width="1.4"/></svg>
<svg style="left:31px;top:665.6px" width="18" height="12"><rect x="0" y="1" width="9" height="10" fill="#1f70c1"/><path d="M3 3H6M4.5 3V9M3 9H6" stroke="#fff" stroke-width="1"/><path d="M13 2V10M11 4L13 1.5L15 4" fill="none" stroke="#1e1e1e" stroke-width="1.4"/></svg>
<svg style="left:92px;top:416.5px" width="18" height="17"><path d="M3 10 L9 4 L13 8 L7 14 C5 16 1 16 1 14 C1 12 2 11 3 10Z" fill="#5b9bd5" stroke="#3a78b5" stroke-width="1"/><path d="M11 6L17 0" stroke="#6b6b6b" stroke-width="1.6"/></svg>
<div style="position:absolute;left:9px;top:938px;width:1362px;height:23px;background:#f5f5f5;border-bottom:1px solid #cccedb;box-sizing:border-box"></div>
<div style="position:absolute;left:9px;top:938px;width:75px;height:22px;background:#fff;border:1px solid #cccedb;box-sizing:border-box"></div>
<div style="position:absolute;left:12px;top:939px;white-space:pre;font-size:15px;line-height:20px;color:#1e1e1e;">92 %</div>
<svg style="left:72px;top:948px" width="8" height="5"><path d="M0 0H8L4 4.5Z" fill="#717171"/></svg>
<svg style="left:88px;top:941px" width="15" height="17"><path d="M7.5 1 C11.5 1 14 4 14 7.5 C14 10 12.5 11.5 11 12.5V16M7.5 1 C3.5 1 1 4 1 7.5 C1 10 2.5 11.5 4 12.5V16M7.5 4V14M4.5 7L7.5 9L10.5 7" fill="none" stroke="#8e5fc7" stroke-width="1.4"/></svg>
<svg style="left:137px;top:941px" width="15" height="15"><circle cx="7.5" cy="7.5" r="7.2" fill="#1e8c34"/><path d="M4 7.5L6.5 10L11 5" fill="none" stroke="#fff" stroke-width="1.6"/></svg>
<div style="position:absolute;left:157px;top:940px;white-space:pre;font-size:15px;line-height:20px;color:#1e1e1e;"><span style="font-size:14.2px">未找到相关问题</span></div>
<div style="position:absolute;left:340px;top:941px;width:1px;height:17px;background:#cccedb"></div>
<svg style="left:355px;top:940px" width="17" height="17"><path d="M9 8L15 2" stroke="#6b6b6b" stroke-width="1.8"/><path d="M2 10 L8 6 L11 9 L7 15 Z" fill="#e8b23a" stroke="#b88a1a" stroke-width="0.8"/><path d="M1 3L2 1M4 2V0" stroke="#1f70c1" stroke-width="1"/></svg>
<svg style="left:378px;top:946px" width="9" height="6"><path d="M0 0H9L4.5 5.5Z" fill="#1e1e1e"/></svg>
<div style="position:absolute;left:1080px;top:940px;white-space:pre;font-size:14.5px;line-height:20px;color:#1e1e1e;"><span style="font-size:14.5px">行</span>: 18</div>
<div style="position:absolute;left:1139px;top:940px;white-space:pre;font-size:14.5px;line-height:20px;color:#1e1e1e;"><span style="font-size:14.5px">字符</span>: 29</div>
<div style="position:absolute;left:1213px;top:940px;white-space:pre;font-size:14.5px;line-height:20px;color:#1e1e1e;"><span style="font-size:14.5px">列</span>: 49</div>
<div style="position:absolute;left:1273px;top:940px;white-space:pre;font-size:14.5px;line-height:20px;color:#1e1e1e;"><span style="font-size:14.5px">空格</span></div>
<div style="position:absolute;left:1327px;top:940px;white-space:pre;font-size:14.5px;line-height:20px;color:#1e1e1e;">CRLF</div>
<div style="position:absolute;left:8px;top:968px;white-space:pre;font-size:16px;line-height:22px;color:#1e1e1e;"><span style="font-size:15px">错误列表</span></div>
<div style="position:absolute;left:8px;top:992px;width:60px;height:8px;background:#cccedb"></div>
<div style="position:absolute;left:83px;top:968px;white-space:pre;font-size:16px;line-height:22px;color:#1e1e1e;"><span style="font-size:15px">命令窗口</span></div>
<div style="position:absolute;left:83px;top:992px;width:60px;height:8px;background:#cccedb"></div>
<div style="position:absolute;left:158px;top:968px;white-space:pre;font-size:16px;line-height:22px;color:#1e1e1e;"><span style="font-size:15px">输出</span></div>
<div style="position:absolute;left:158px;top:992px;width:30px;height:8px;background:#cccedb"></div>
<div style="position:absolute;left:203px;top:968px;white-space:pre;font-size:16px;line-height:22px;color:#1e1e1e;"><span style="font-size:15px">程序包管理器控制台</span></div>
<div style="position:absolute;left:203px;top:992px;width:135px;height:8px;background:#cccedb"></div>
<div style="position:absolute;left:353px;top:968px;white-space:pre;font-size:16px;line-height:22px;color:#1e1e1e;">CodeLens</div>
<div style="position:absolute;left:353px;top:992px;width:72px;height:8px;background:#cccedb"></div>
<div style="position:absolute;left:440px;top:968px;white-space:pre;font-size:16px;line-height:22px;color:#1e1e1e;"><span style="font-size:15px">调用层次结构</span></div>
<div style="position:absolute;left:440px;top:992px;width:90px;height:8px;background:#cccedb"></div>
<div style="position:absolute;left:545px;top:968px;white-space:pre;font-size:16px;line-height:22px;color:#1e1e1e;"><span style="font-size:15px">测试资源管理器</span></div>
<div style="position:absolute;left:545px;top:992px;width:105px;height:8px;background:#cccedb"></div>
<div style="position:absolute;left:0px;top:1000px;width:1920px;height:30px;background:#006cbe"></div>
<svg style="left:5px;top:1005px" width="21" height="20"><path d="M1 1H20V14H12L8 18.5V14H1Z" fill="none" stroke="#fff" stroke-width="1.6"/></svg>
<div style="position:absolute;left:35px;top:1005px;white-space:pre;font-size:15px;line-height:20px;color:#fff;"><span style="font-size:15px">已保存的项</span></div>
<svg style="left:1418px;top:1006px" width="16" height="18"><path d="M4 17V1M1 4L4 1L7 4M12 1V17M9 14L12 17L15 14" fill="none" stroke="#fff" stroke-width="1.5"/></svg>
<div style="position:absolute;left:1442px;top:1005px;white-space:pre;font-size:16px;line-height:20px;color:#fff;">0 / 0</div>
<svg style="left:1482px;top:1012px" width="9" height="6"><path d="M0 5.5L4.5 0L9 5.5Z" fill="#fff"/></svg>
<svg style="left:1505px;top:1006px" width="17" height="17"><path d="M2 15L3 11L12 2L15 5L6 14Z M10.5 3.5L13.5 6.5" fill="none" stroke="#fff" stroke-width="1.5"/></svg>
<div style="position:absolute;left:1546px;top:1005px;white-space:pre;font-size:16px;line-height:20px;color:#fff;">65</div>
<svg style="left:1593px;top:1005px" width="20" height="20"><circle cx="4" cy="3.5" r="2.5" fill="none" stroke="#fff" stroke-width="1.4"/><circle cx="4" cy="16" r="2.5" fill="none" stroke="#fff" stroke-width="1.4"/><circle cx="14" cy="8" r="2.5" fill="none" stroke="#fff" stroke-width="1.4"/><path d="M4 6V13.5M14 10.5 C14 13 8 12 4 13.5" fill="none" stroke="#fff" stroke-width="1.4"/><circle cx="15" cy="15.5" r="4.5" fill="#fff"/><path d="M15 18V13M13 15L15 13L17 15" fill="none" stroke="#006cbe" stroke-width="1.3"/></svg>
<div style="position:absolute;left:1618px;top:1005px;white-space:pre;font-size:16px;line-height:20px;color:#fff;">master</div>
<svg style="left:1676px;top:1012px" width="9" height="6"><path d="M0 5.5L4.5 0L9 5.5Z" fill="#fff"/></svg>
<svg style="left:1725px;top:1005px" width="20" height="20"><path d="M1 1H17V10M1 1V17H9" fill="none" stroke="#fff" stroke-width="1.5"/><path d="M1 4H17M5 4V13" stroke="#fff" stroke-width="1.3"/><circle cx="14.5" cy="15" r="4.5" fill="#fff"/><path d="M14.5 17.5V12.5M12.5 14.5L14.5 12.5L16.5 14.5" fill="none" stroke="#0e6fc1" stroke-width="1.3"/></svg>
<div style="position:absolute;left:1748px;top:1005px;white-space:pre;font-size:16px;line-height:20px;color:#fff;">peng-eshop</div>
<svg style="left:1836px;top:1012px" width="9" height="6"><path d="M0 5.5L4.5 0L9 5.5Z" fill="#fff"/></svg>
<svg style="left:1880px;top:1005px" width="24" height="24"><path d="M2 15H16 C14 13 14 11 14 8 C14 4.5 12 2.5 9 2.5 C6 2.5 4 4.5 4 8 C4 11 4 13 2 15Z M7 17.5 C7.5 19 10.5 19 11 17.5" fill="none" stroke="#fff" stroke-width="1.4"/><circle cx="17" cy="17" r="6" fill="#e51400"/><path d="M17.5 13.5V20.5M15.5 15L17.5 13.5" fill="none" stroke="#fff" stroke-width="1.3"/></svg>
<div style="position:absolute;left:1380px;top:88px;width:501px;height:873px;border:1px solid #cccedb;box-sizing:border-box;background:#eeeef2"></div>
<div style="position:absolute;left:1385px;top:91px;white-space:pre;font-size:15px;line-height:22px;color:#1e1e1e;"><span style="font-size:15px">解决方案资源管理器</span></div>
<div style="position:absolute;left:1530px;top:98px;width:282px;height:6px;background-image:radial-gradient(#c0c0c8 0.7px,transparent 0.9px);background-size:3px 3px"></div>
<svg style="left:1817px;top:98px" width="11" height="7"><path d="M0 0H11L5.5 6.5Z" fill="#1e1e1e"/></svg>
<svg style="left:1838px;top:94px" width="10" height="15"><path d="M2 1H8M3 1V8M7 1V8M1 9H9M5 9V15" fill="none" stroke="#1e1e1e" stroke-width="1.6"/><rect x="3" y="1" width="4" height="7" fill="#1e1e1e"/></svg>
<svg style="left:1858px;top:96px" width="12" height="12"><path d="M1 1L11 11M11 1L1 11" stroke="#1e1e1e" stroke-width="1.6"/></svg>
<svg style="left:1389px;top:123px" width="22" height="22"><rect x="8" y="1" width="12" height="14" fill="#f5f5f5" stroke="#424242" stroke-width="1.5"/><path d="M8 3.5H20M11 6.5H18M11 9H18M11 11.5H18" stroke="#424242" stroke-width="1.2"/><path d="M1 13L5 16.5L1 20ZM5 16.5L11 11.5V21.5Z" fill="none" stroke="#8e5fc7" stroke-width="1.8" stroke-linejoin="round"/></svg>
<div style="position:absolute;left:1418px;top:122px;width:1px;height:24px;background:#cccedb"></div>
<svg style="left:1427px;top:121px" width="20" height="22"><path d="M0 0.5H6L3 3.5V7" fill="#1f70c1" stroke="#1f70c1" stroke-width="1"/><circle cx="11.5" cy="13" r="7" fill="none" stroke="#424242" stroke-width="1.6"/><path d="M11.5 8.5V13H15" fill="none" stroke="#424242" stroke-width="1.4"/></svg>
<svg style="left:1452px;top:132px" width="8" height="5"><path d="M0 0H8L4 4.5Z" fill="#717171"/></svg>
<svg style="left:1467px;top:126px" width="19" height="16"><path d="M1 5H17M4 1.5L0.8 5L4 8.5M18 11H2M15 7.5L18.2 11L15 14.5" fill="none" stroke="#424242" stroke-width="1.5"/></svg>
<svg style="left:1496px;top:124px" width="19" height="19"><rect x="1" y="4" width="14" height="14" fill="none" stroke="#424242" stroke-width="1.6"/><path d="M4 1H18V15" fill="none" stroke="#424242" stroke-width="1.4"/><path d="M4.5 11H11.5" stroke="#424242" stroke-width="1.6"/></svg>
<svg style="left:1523px;top:124px" width="19" height="19"><rect x="1" y="6" width="11" height="12" fill="none" stroke="#424242" stroke-width="1.6"/><path d="M5 6V2H17V14H12" fill="none" stroke="#424242" stroke-width="1.6"/></svg>
<div style="position:absolute;left:1550px;top:122px;width:1px;height:24px;background:#cccedb"></div>
<div style="position:absolute;left:1557px;top:121px;width:26px;height:26px;border:1.2px solid #1f70c1;box-sizing:border-box"></div>
<svg style="left:1561px;top:125px" width="18" height="18"><rect x="1" y="1" width="4" height="4" fill="none" stroke="#424242" stroke-width="1.3"/><rect x="7" y="7" width="4" height="4" fill="none" stroke="#424242" stroke-width="1.3"/><rect x="12" y="12" width="5" height="5" fill="none" stroke="#424242" stroke-width="1.3"/><path d="M3 5V9H7M9 11V14.5H12" fill="none" stroke="#424242" stroke-width="1.1"/><circle cx="3" cy="2.5" r="1.5" fill="#1f70c1"/></svg>
<svg style="left:1587px;top:132px" width="8" height="5"><path d="M0 0H8L4 4.5Z" fill="#717171"/></svg>
<div style="position:absolute;left:1602px;top:122px;width:1px;height:24px;background:#cccedb"></div>
<svg style="left:1612px;top:124px" width="19" height="19"><path d="M2 17L10 9" stroke="#424242" stroke-width="3"/><path d="M9 9 C7 5 10 1 14 1.5L11.5 4.5L14.5 7.5L17.5 5 C18 9 14 12 10 10Z" fill="#424242"/></svg>
<div style="position:absolute;left:1635px;top:118px;width:27px;height:27px;border:1.2px solid #1f70c1;box-sizing:border-box"></div>
<svg style="left:1640px;top:125px" width="18" height="16"><rect x="1" y="9" width="11" height="4" fill="none" stroke="#424242" stroke-width="1.4"/><path d="M2 14H14" stroke="#424242" stroke-width="1.4"/><path d="M14 3L15.5 1M16.5 5.5H18M15 8L16.5 9" stroke="#e8a500" stroke-width="1.2"/></svg>
<div style="position:absolute;left:1383px;top:150px;width:494px;height:27px;background:#fff;border:1px solid #cccedb;box-sizing:border-box"></div>
<div style="position:absolute;left:1389px;top:153px;white-space:pre;font-size:15px;line-height:22px;color:#6d6d6d;"><span style="font-size:15px">搜索解决方案资源管理器</span>(Ctrl+;)</div>
<svg style="left:1842px;top:155px" width="16" height="16"><circle cx="10" cy="6" r="4.3" fill="none" stroke="#717171" stroke-width="1.8"/><path d="M7 9L1.5 14.5" stroke="#717171" stroke-width="2.4"/></svg>
<svg style="left:1865px;top:162px" width="8" height="5"><path d="M0 0H8L4 4.5Z" fill="#717171"/></svg>
<div style="position:absolute;left:1381px;top:178px;width:499px;height:782px;background:#f5f5f5"></div>
<div style="position:absolute;left:1381px;top:178px;width:478px;height:736px;overflow:hidden">
<div style="position:absolute;left:0px;top:553px;width:478px;height:24px;background:#cccedb"></div>
<svg style="left:36px;top:9px" width="9" height="9"><path d="M8.5 0.5V8.5H0.5Z" fill="#1e1e1e"/></svg>
<svg style="left:51px;top:9px" width="9" height="10"><path d="M2.2 4.5V3 C2.2 0.5 6.8 0.5 6.8 3V4.5" fill="none" stroke="#1f70c1" stroke-width="1.4"/><rect x="0.8" y="4.5" width="7.4" height="5" fill="#dbe8f6" stroke="#1f70c1" stroke-width="1.3"/></svg>
<svg style="left:62px;top:4px" width="22" height="22"><rect x="4.2" y="0.7" width="16" height="15.6" fill="#e8e8e8" stroke="#5a5a5a" stroke-width="1.4"/><path d="M4.2 3.2H20.2" stroke="#5a5a5a" stroke-width="2.4"/><circle cx="6.5" cy="14.5" r="6.3" fill="#1f70c1"/><path d="M0.5 14.5H12.5M6.5 8.2 C3.8 10.5 3.8 18.5 6.5 20.8M6.5 8.2 C9.2 10.5 9.2 18.5 6.5 20.8M6.5 8.2V20.8M1.5 11.5H11.5M1.5 17.5H11.5" fill="none" stroke="#cfe0f3" stroke-width="0.8"/></svg>
<div class="tr" style="left:89px;top:1.5px;font-weight:bold;">Webhooks.API</div>
<svg style="left:59px;top:31px" width="8" height="12"><path d="M1 1L6.5 6L1 11Z" fill="none" stroke="#1e1e1e" stroke-width="1.5" stroke-linejoin="round"/></svg>
<svg style="left:87px;top:28px" width="19" height="18"><path d="M5 13 C1 13 0.5 7.5 4 7 C4 2.5 9.5 1 12 4.5 C15 3.5 18 6 17 9 C19 10 18.5 13 15.5 13" fill="none" stroke="#5b9bd5" stroke-width="1.4"/><path d="M7 7V10M11 7V10M6 10H12V12 C12 14 6 14 6 12Z M9 14V17.5" fill="none" stroke="#1a9c9c" stroke-width="1.4"/></svg>
<div class="tr" style="left:112px;top:25.5px;">Connected Services</div>
<svg style="left:59px;top:57px" width="9" height="9"><path d="M8.5 0.5V8.5H0.5Z" fill="#1e1e1e"/></svg>
<svg style="left:74px;top:57px" width="9" height="10"><path d="M2.2 4.5V3 C2.2 0.5 6.8 0.5 6.8 3V4.5" fill="none" stroke="#1f70c1" stroke-width="1.4"/><rect x="0.8" y="4.5" width="7.4" height="5" fill="#dbe8f6" stroke="#1f70c1" stroke-width="1.3"/></svg>
<svg style="left:86px;top:52px" width="20" height="17"><path d="M1 2.5 C1 1.5 1.5 1 2.5 1H7.5L9.5 3H17.5 C18.5 3 19 3.5 19 4.5V14.5 C19 15.5 18.5 16 17.5 16H2.5 C1.5 16 1 15.5 1 14.5Z" fill="#dcb67a" stroke="#c29a44" stroke-width="1.1"/><path d="M1.5 5H18.5" stroke="#c29a44" stroke-width="1"/></svg>
<svg style="left:83px;top:59px" width="13" height="13"><path d="M1.5 4 C1 1.5 3.5 0 5.5 1L4 3L5.5 4.5L7.5 3 C8.5 5 7 7.5 5 7L11 12" fill="#1e1e1e" stroke="#1e1e1e" stroke-width="1.8" stroke-linejoin="round"/></svg>
<div class="tr" style="left:112px;top:49.5px;">Properties</div>
<svg style="left:96px;top:81px" width="9" height="10"><path d="M2.2 4.5V3 C2.2 0.5 6.8 0.5 6.8 3V4.5" fill="none" stroke="#1f70c1" stroke-width="1.4"/><rect x="0.8" y="4.5" width="7.4" height="5" fill="#dbe8f6" stroke="#1f70c1" stroke-width="1.3"/></svg>
<svg style="left:110px;top:75px" width="16" height="20"><path d="M1 1H10L15 6V19H1Z" fill="#f0f0f0" stroke="#6b6b6b" stroke-width="1.3"/><path d="M10 1V6H15" fill="none" stroke="#6b6b6b" stroke-width="1.1"/><path d="M6.5 8.5 C4.8 8.5 5.5 11.8 4 12.5 C5.5 13.2 4.8 16.5 6.5 16.5M9.5 8.5 C11.2 8.5 10.5 11.8 12 12.5 C10.5 13.2 11.2 16.5 9.5 16.5" fill="none" stroke="#333" stroke-width="1.4"/></svg>
<div class="tr" style="left:134px;top:73.5px;">launchSettings.json</div>
<svg style="left:59px;top:103px" width="8" height="12"><path d="M1 1L6.5 6L1 11Z" fill="none" stroke="#1e1e1e" stroke-width="1.5" stroke-linejoin="round"/></svg>
<svg style="left:84px;top:101px" width="22" height="16"><rect x="1" y="8" width="6" height="6" fill="none" stroke="#424242" stroke-width="1.3"/><rect x="9" y="1" width="6" height="5" fill="none" stroke="#424242" stroke-width="1.3"/><rect x="11" y="8" width="6" height="6" fill="none" stroke="#424242" stroke-width="1.3"/><path d="M4 8V3.5H9M7 11H11M15 3.5H19V9" fill="none" stroke="#424242" stroke-width="1.2"/></svg>
<div class="tr" style="left:112px;top:97.5px;"><span style="font-size:15px">依赖项</span></div>
<svg style="left:59px;top:129px" width="9" height="9"><path d="M8.5 0.5V8.5H0.5Z" fill="#1e1e1e"/></svg>
<svg style="left:74px;top:129px" width="9" height="10"><path d="M2.2 4.5V3 C2.2 0.5 6.8 0.5 6.8 3V4.5" fill="none" stroke="#1f70c1" stroke-width="1.4"/><rect x="0.8" y="4.5" width="7.4" height="5" fill="#dbe8f6" stroke="#1f70c1" stroke-width="1.3"/></svg>
<svg style="left:86px;top:124px" width="20" height="17"><path d="M1 2.5 C1 1.5 1.5 1 2.5 1H7.5L9.5 3H17.5 C18.5 3 19 3.5 19 4.5V14.5 C19 15.5 18.5 16 17.5 16H2.5 C1.5 16 1 15.5 1 14.5Z" fill="#dcb67a" stroke="#c29a44" stroke-width="1.1"/><path d="M1.5 5H18.5" stroke="#c29a44" stroke-width="1"/></svg>
<div class="tr" style="left:112px;top:121.5px;">Apis</div>
<svg style="left:82px;top:151px" width="8" height="12"><path d="M1 1L6.5 6L1 11Z" fill="none" stroke="#1e1e1e" stroke-width="1.5" stroke-linejoin="round"/></svg>
<svg style="left:96px;top:154px" width="10" height="8"><path d="M0.8 3.5L3.5 6.5L9 1" fill="none" stroke="#c5303a" stroke-width="1.5"/></svg>
<svg style="left:108px;top:153px" width="20" height="11"><path d="M8.2 1.9 C7.5 1.1 6.4 0.9 5.2 0.9 C2.6 0.9 1 2.8 1 5.3 C1 7.9 2.6 9.8 5.2 9.8 C6.4 9.8 7.5 9.5 8.2 8.8" fill="none" stroke="#2f9a2f" stroke-width="1.9"/><path d="M12.5 0.3V7M16.5 0.3V7M10 2.2H19M10 5.2H19" fill="none" stroke="#2f9a2f" stroke-width="1.7"/></svg>
<div class="tr" style="left:134px;top:145.5px;">WebHooksApi.cs</div>
<svg style="left:59px;top:177px" width="9" height="9"><path d="M8.5 0.5V8.5H0.5Z" fill="#1e1e1e"/></svg>
<svg style="left:74px;top:177px" width="9" height="10"><path d="M2.2 4.5V3 C2.2 0.5 6.8 0.5 6.8 3V4.5" fill="none" stroke="#1f70c1" stroke-width="1.4"/><rect x="0.8" y="4.5" width="7.4" height="5" fill="#dbe8f6" stroke="#1f70c1" stroke-width="1.3"/></svg>
<svg style="left:86px;top:172px" width="20" height="17"><path d="M1 2.5 C1 1.5 1.5 1 2.5 1H7.5L9.5 3H17.5 C18.5 3 19 3.5 19 4.5V14.5 C19 15.5 18.5 16 17.5 16H2.5 C1.5 16 1 15.5 1 14.5Z" fill="#dcb67a" stroke="#c29a44" stroke-width="1.1"/><path d="M1.5 5H18.5" stroke="#c29a44" stroke-width="1"/></svg>
<div class="tr" style="left:112px;top:169.5px;">Exceptions</div>
<svg style="left:82px;top:199px" width="8" height="12"><path d="M1 1L6.5 6L1 11Z" fill="none" stroke="#1e1e1e" stroke-width="1.5" stroke-linejoin="round"/></svg>
<svg style="left:96px;top:201px" width="9" height="10"><path d="M2.2 4.5V3 C2.2 0.5 6.8 0.5 6.8 3V4.5" fill="none" stroke="#1f70c1" stroke-width="1.4"/><rect x="0.8" y="4.5" width="7.4" height="5" fill="#dbe8f6" stroke="#1f70c1" stroke-width="1.3"/></svg>
<svg style="left:108px;top:201px" width="20" height="11"><path d="M8.2 1.9 C7.5 1.1 6.4 0.9 5.2 0.9 C2.6 0.9 1 2.8 1 5.3 C1 7.9 2.6 9.8 5.2 9.8 C6.4 9.8 7.5 9.5 8.2 8.8" fill="none" stroke="#2f9a2f" stroke-width="1.9"/><path d="M12.5 0.3V7M16.5 0.3V7M10 2.2H19M10 5.2H19" fill="none" stroke="#2f9a2f" stroke-width="1.7"/></svg>
<div class="tr" style="left:134px;top:193.5px;">WebhooksDomainException.cs</div>
<svg style="left:59px;top:225px" width="9" height="9"><path d="M8.5 0.5V8.5H0.5Z" fill="#1e1e1e"/></svg>
<svg style="left:74px;top:225px" width="9" height="10"><path d="M2.2 4.5V3 C2.2 0.5 6.8 0.5 6.8 3V4.5" fill="none" stroke="#1f70c1" stroke-width="1.4"/><rect x="0.8" y="4.5" width="7.4" height="5" fill="#dbe8f6" stroke="#1f70c1" stroke-width="1.3"/></svg>
<svg style="left:86px;top:220px" width="20" height="17"><path d="M1 2.5 C1 1.5 1.5 1 2.5 1H7.5L9.5 3H17.5 C18.5 3 19 3.5 19 4.5V14.5 C19 15.5 18.5 16 17.5 16H2.5 C1.5 16 1 15.5 1 14.5Z" fill="#dcb67a" stroke="#c29a44" stroke-width="1.1"/><path d="M1.5 5H18.5" stroke="#c29a44" stroke-width="1"/></svg>
<div class="tr" style="left:112px;top:217.5px;">Extensions</div>
<svg style="left:82px;top:247px" width="8" height="12"><path d="M1 1L6.5 6L1 11Z" fill="none" stroke="#1e1e1e" stroke-width="1.5" stroke-linejoin="round"/></svg>
<svg style="left:96px;top:249px" width="9" height="10"><path d="M2.2 4.5V3 C2.2 0.5 6.8 0.5 6.8 3V4.5" fill="none" stroke="#1f70c1" stroke-width="1.4"/><rect x="0.8" y="4.5" width="7.4" height="5" fill="#dbe8f6" stroke="#1f70c1" stroke-width="1.3"/></svg>
<svg style="left:108px;top:249px" width="20" height="11"><path d="M8.2 1.9 C7.5 1.1 6.4 0.9 5.2 0.9 C2.6 0.9 1 2.8 1 5.3 C1 7.9 2.6 9.8 5.2 9.8 C6.4 9.8 7.5 9.5 8.2 8.8" fill="none" stroke="#2f9a2f" stroke-width="1.9"/><path d="M12.5 0.3V7M16.5 0.3V7M10 2.2H19M10 5.2H19" fill="none" stroke="#2f9a2f" stroke-width="1.7"/></svg>
<svg style="left:105px;top:250px" width="11" height="11"><rect x="0.7" y="0.7" width="9.6" height="9.6" fill="#f0f0f0" stroke="#424242" stroke-width="1.4"/><path d="M3 8L7.5 3.5M4.5 3.5H7.5V6.5" fill="none" stroke="#424242" stroke-width="1.2"/></svg>
<div class="tr" style="left:134px;top:241.5px;">ActivityExtensions.cs</div>
<svg style="left:82px;top:271px" width="8" height="12"><path d="M1 1L6.5 6L1 11Z" fill="none" stroke="#1e1e1e" stroke-width="1.5" stroke-linejoin="round"/></svg>
<svg style="left:96px;top:273px" width="9" height="10"><path d="M2.2 4.5V3 C2.2 0.5 6.8 0.5 6.8 3V4.5" fill="none" stroke="#1f70c1" stroke-width="1.4"/><rect x="0.8" y="4.5" width="7.4" height="5" fill="#dbe8f6" stroke="#1f70c1" stroke-width="1.3"/></svg>
<svg style="left:108px;top:273px" width="20" height="11"><path d="M8.2 1.9 C7.5 1.1 6.4 0.9 5.2 0.9 C2.6 0.9 1 2.8 1 5.3 C1 7.9 2.6 9.8 5.2 9.8 C6.4 9.8 7.5 9.5 8.2 8.8" fill="none" stroke="#2f9a2f" stroke-width="1.9"/><path d="M12.5 0.3V7M16.5 0.3V7M10 2.2H19M10 5.2H19" fill="none" stroke="#2f9a2f" stroke-width="1.7"/></svg>
<div class="tr" style="left:134px;top:265.5px;">Extensions.cs</div>
<svg style="left:82px;top:295px" width="8" height="12"><path d="M1 1L6.5 6L1 11Z" fill="none" stroke="#1e1e1e" stroke-width="1.5" stroke-linejoin="round"/></svg>
<svg style="left:96px;top:297px" width="9" height="10"><path d="M2.2 4.5V3 C2.2 0.5 6.8 0.5 6.8 3V4.5" fill="none" stroke="#1f70c1" stroke-width="1.4"/><rect x="0.8" y="4.5" width="7.4" height="5" fill="#dbe8f6" stroke="#1f70c1" stroke-width="1.3"/></svg>
<svg style="left:108px;top:297px" width="20" height="11"><path d="M8.2 1.9 C7.5 1.1 6.4 0.9 5.2 0.9 C2.6 0.9 1 2.8 1 5.3 C1 7.9 2.6 9.8 5.2 9.8 C6.4 9.8 7.5 9.5 8.2 8.8" fill="none" stroke="#2f9a2f" stroke-width="1.9"/><path d="M12.5 0.3V7M16.5 0.3V7M10 2.2H19M10 5.2H19" fill="none" stroke="#2f9a2f" stroke-width="1.7"/></svg>
<svg style="left:105px;top:298px" width="11" height="11"><rect x="0.7" y="0.7" width="9.6" height="9.6" fill="#f0f0f0" stroke="#424242" stroke-width="1.4"/><path d="M3 8L7.5 3.5M4.5 3.5H7.5V6.5" fill="none" stroke="#424242" stroke-width="1.2"/></svg>
<div class="tr" style="left:134px;top:289.5px;">MigrateDbContextExtensions.cs</div>
<svg style="left:82px;top:319px" width="8" height="12"><path d="M1 1L6.5 6L1 11Z" fill="none" stroke="#1e1e1e" stroke-width="1.5" stroke-linejoin="round"/></svg>
<svg style="left:96px;top:322px" width="10" height="8"><path d="M0.8 3.5L3.5 6.5L9 1" fill="none" stroke="#c5303a" stroke-width="1.5"/></svg>
<svg style="left:108px;top:321px" width="20" height="11"><path d="M8.2 1.9 C7.5 1.1 6.4 0.9 5.2 0.9 C2.6 0.9 1 2.8 1 5.3 C1 7.9 2.6 9.8 5.2 9.8 C6.4 9.8 7.5 9.5 8.2 8.8" fill="none" stroke="#2f9a2f" stroke-width="1.9"/><path d="M12.5 0.3V7M16.5 0.3V7M10 2.2H19M10 5.2H19" fill="none" stroke="#2f9a2f" stroke-width="1.7"/></svg>
<div class="tr" style="left:134px;top:313.5px;">RouteHandlerBuilderExtensions.cs</div>
<svg style="left:59px;top:345px" width="9" height="9"><path d="M8.5 0.5V8.5H0.5Z" fill="#1e1e1e"/></svg>
<svg style="left:74px;top:345px" width="9" height="10"><path d="M2.2 4.5V3 C2.2 0.5 6.8 0.5 6.8 3V4.5" fill="none" stroke="#1f70c1" stroke-width="1.4"/><rect x="0.8" y="4.5" width="7.4" height="5" fill="#dbe8f6" stroke="#1f70c1" stroke-width="1.3"/></svg>
<svg style="left:86px;top:340px" width="20" height="17"><path d="M1 2.5 C1 1.5 1.5 1 2.5 1H7.5L9.5 3H17.5 C18.5 3 19 3.5 19 4.5V14.5 C19 15.5 18.5 16 17.5 16H2.5 C1.5 16 1 15.5 1 14.5Z" fill="#dcb67a" stroke="#c29a44" stroke-width="1.1"/><path d="M1.5 5H18.5" stroke="#c29a44" stroke-width="1"/></svg>
<div class="tr" style="left:112px;top:337.5px;">Infrastructure</div>
<svg style="left:82px;top:367px" width="8" height="12"><path d="M1 1L6.5 6L1 11Z" fill="none" stroke="#1e1e1e" stroke-width="1.5" stroke-linejoin="round"/></svg>
<svg style="left:96px;top:370px" width="10" height="8"><path d="M0.8 3.5L3.5 6.5L9 1" fill="none" stroke="#c5303a" stroke-width="1.5"/></svg>
<svg style="left:108px;top:369px" width="20" height="11"><path d="M8.2 1.9 C7.5 1.1 6.4 0.9 5.2 0.9 C2.6 0.9 1 2.8 1 5.3 C1 7.9 2.6 9.8 5.2 9.8 C6.4 9.8 7.5 9.5 8.2 8.8" fill="none" stroke="#2f9a2f" stroke-width="1.9"/><path d="M12.5 0.3V7M16.5 0.3V7M10 2.2H19M10 5.2H19" fill="none" stroke="#2f9a2f" stroke-width="1.7"/></svg>
<div class="tr" style="left:134px;top:361.5px;">WebhooksContext.cs</div>
<svg style="left:59px;top:393px" width="9" height="9"><path d="M8.5 0.5V8.5H0.5Z" fill="#1e1e1e"/></svg>
<svg style="left:74px;top:393px" width="9" height="10"><path d="M2.2 4.5V3 C2.2 0.5 6.8 0.5 6.8 3V4.5" fill="none" stroke="#1f70c1" stroke-width="1.4"/><rect x="0.8" y="4.5" width="7.4" height="5" fill="#dbe8f6" stroke="#1f70c1" stroke-width="1.3"/></svg>
<svg style="left:86px;top:388px" width="20" height="17"><path d="M1 2.5 C1 1.5 1.5 1 2.5 1H7.5L9.5 3H17.5 C18.5 3 19 3.5 19 4.5V14.5 C19 15.5 18.5 16 17.5 16H2.5 C1.5 16 1 15.5 1 14.5Z" fill="#dcb67a" stroke="#c29a44" stroke-width="1.1"/><path d="M1.5 5H18.5" stroke="#c29a44" stroke-width="1"/></svg>
<div class="tr" style="left:112px;top:385.5px;">IntegrationEvents</div>
<svg style="left:82px;top:415px" width="8" height="12"><path d="M1 1L6.5 6L1 11Z" fill="none" stroke="#1e1e1e" stroke-width="1.5" stroke-linejoin="round"/></svg>
<svg style="left:96px;top:417px" width="9" height="10"><path d="M2.2 4.5V3 C2.2 0.5 6.8 0.5 6.8 3V4.5" fill="none" stroke="#1f70c1" stroke-width="1.4"/><rect x="0.8" y="4.5" width="7.4" height="5" fill="#dbe8f6" stroke="#1f70c1" stroke-width="1.3"/></svg>
<svg style="left:108px;top:417px" width="20" height="11"><path d="M8.2 1.9 C7.5 1.1 6.4 0.9 5.2 0.9 C2.6 0.9 1 2.8 1 5.3 C1 7.9 2.6 9.8 5.2 9.8 C6.4 9.8 7.5 9.5 8.2 8.8" fill="none" stroke="#2f9a2f" stroke-width="1.9"/><path d="M12.5 0.3V7M16.5 0.3V7M10 2.2H19M10 5.2H19" fill="none" stroke="#2f9a2f" stroke-width="1.7"/></svg>
<div class="tr" style="left:134px;top:409.5px;">OrderStatusChangedToPaidIntegrationEvent.cs</div>
<svg style="left:82px;top:439px" width="8" height="12"><path d="M1 1L6.5 6L1 11Z" fill="none" stroke="#1e1e1e" stroke-width="1.5" stroke-linejoin="round"/></svg>
<svg style="left:96px;top:442px" width="10" height="8"><path d="M0.8 3.5L3.5 6.5L9 1" fill="none" stroke="#c5303a" stroke-width="1.5"/></svg>
<svg style="left:108px;top:441px" width="20" height="11"><path d="M8.2 1.9 C7.5 1.1 6.4 0.9 5.2 0.9 C2.6 0.9 1 2.8 1 5.3 C1 7.9 2.6 9.8 5.2 9.8 C6.4 9.8 7.5 9.5 8.2 8.8" fill="none" stroke="#2f9a2f" stroke-width="1.9"/><path d="M12.5 0.3V7M16.5 0.3V7M10 2.2H19M10 5.2H19" fill="none" stroke="#2f9a2f" stroke-width="1.7"/></svg>
<div class="tr" style="left:134px;top:433.5px;">OrderStatusChangedToPaidIntegrationEventHandler.cs</div>
<svg style="left:82px;top:463px" width="8" height="12"><path d="M1 1L6.5 6L1 11Z" fill="none" stroke="#1e1e1e" stroke-width="1.5" stroke-linejoin="round"/></svg>
<svg style="left:96px;top:465px" width="9" height="10"><path d="M2.2 4.5V3 C2.2 0.5 6.8 0.5 6.8 3V4.5" fill="none" stroke="#1f70c1" stroke-width="1.4"/><rect x="0.8" y="4.5" width="7.4" height="5" fill="#dbe8f6" stroke="#1f70c1" stroke-width="1.3"/></svg>
<svg style="left:108px;top:465px" width="20" height="11"><path d="M8.2 1.9 C7.5 1.1 6.4 0.9 5.2 0.9 C2.6 0.9 1 2.8 1 5.3 C1 7.9 2.6 9.8 5.2 9.8 C6.4 9.8 7.5 9.5 8.2 8.8" fill="none" stroke="#2f9a2f" stroke-width="1.9"/><path d="M12.5 0.3V7M16.5 0.3V7M10 2.2H19M10 5.2H19" fill="none" stroke="#2f9a2f" stroke-width="1.7"/></svg>
<div class="tr" style="left:134px;top:457.5px;">OrderStatusChangedToShippedIntegrationEvent.cs</div>
<svg style="left:82px;top:487px" width="8" height="12"><path d="M1 1L6.5 6L1 11Z" fill="none" stroke="#1e1e1e" stroke-width="1.5" stroke-linejoin="round"/></svg>
<svg style="left:96px;top:490px" width="10" height="8"><path d="M0.8 3.5L3.5 6.5L9 1" fill="none" stroke="#c5303a" stroke-width="1.5"/></svg>
<svg style="left:108px;top:489px" width="20" height="11"><path d="M8.2 1.9 C7.5 1.1 6.4 0.9 5.2 0.9 C2.6 0.9 1 2.8 1 5.3 C1 7.9 2.6 9.8 5.2 9.8 C6.4 9.8 7.5 9.5 8.2 8.8" fill="none" stroke="#2f9a2f" stroke-width="1.9"/><path d="M12.5 0.3V7M16.5 0.3V7M10 2.2H19M10 5.2H19" fill="none" stroke="#2f9a2f" stroke-width="1.7"/></svg>
<div class="tr" style="left:134px;top:481.5px;">OrderStatusChangedToShippedIntegrationEventHandler.cs</div>
<svg style="left:82px;top:511px" width="8" height="12"><path d="M1 1L6.5 6L1 11Z" fill="none" stroke="#1e1e1e" stroke-width="1.5" stroke-linejoin="round"/></svg>
<svg style="left:96px;top:513px" width="9" height="10"><path d="M2.2 4.5V3 C2.2 0.5 6.8 0.5 6.8 3V4.5" fill="none" stroke="#1f70c1" stroke-width="1.4"/><rect x="0.8" y="4.5" width="7.4" height="5" fill="#dbe8f6" stroke="#1f70c1" stroke-width="1.3"/></svg>
<svg style="left:108px;top:513px" width="20" height="11"><path d="M8.2 1.9 C7.5 1.1 6.4 0.9 5.2 0.9 C2.6 0.9 1 2.8 1 5.3 C1 7.9 2.6 9.8 5.2 9.8 C6.4 9.8 7.5 9.5 8.2 8.8" fill="none" stroke="#2f9a2f" stroke-width="1.9"/><path d="M12.5 0.3V7M16.5 0.3V7M10 2.2H19M10 5.2H19" fill="none" stroke="#2f9a2f" stroke-width="1.7"/></svg>
<div class="tr" style="left:134px;top:505.5px;">OrderStockItem.cs</div>
<svg style="left:82px;top:535px" width="8" height="12"><path d="M1 1L6.5 6L1 11Z" fill="none" stroke="#1e1e1e" stroke-width="1.5" stroke-linejoin="round"/></svg>
<svg style="left:96px;top:537px" width="9" height="10"><path d="M2.2 4.5V3 C2.2 0.5 6.8 0.5 6.8 3V4.5" fill="none" stroke="#1f70c1" stroke-width="1.4"/><rect x="0.8" y="4.5" width="7.4" height="5" fill="#dbe8f6" stroke="#1f70c1" stroke-width="1.3"/></svg>
<svg style="left:108px;top:537px" width="20" height="11"><path d="M8.2 1.9 C7.5 1.1 6.4 0.9 5.2 0.9 C2.6 0.9 1 2.8 1 5.3 C1 7.9 2.6 9.8 5.2 9.8 C6.4 9.8 7.5 9.5 8.2 8.8" fill="none" stroke="#2f9a2f" stroke-width="1.9"/><path d="M12.5 0.3V7M16.5 0.3V7M10 2.2H19M10 5.2H19" fill="none" stroke="#2f9a2f" stroke-width="1.7"/></svg>
<div class="tr" style="left:134px;top:529.5px;">ProductPriceChangedIntegrationEvent.cs</div>
<svg style="left:82px;top:559px" width="8" height="12"><path d="M1 1L6.5 6L1 11Z" fill="none" stroke="#1e1e1e" stroke-width="1.5" stroke-linejoin="round"/></svg>
<svg style="left:96px;top:562px" width="10" height="8"><path d="M0.8 3.5L3.5 6.5L9 1" fill="none" stroke="#c5303a" stroke-width="1.5"/></svg>
<svg style="left:108px;top:561px" width="20" height="11"><path d="M8.2 1.9 C7.5 1.1 6.4 0.9 5.2 0.9 C2.6 0.9 1 2.8 1 5.3 C1 7.9 2.6 9.8 5.2 9.8 C6.4 9.8 7.5 9.5 8.2 8.8" fill="none" stroke="#2f9a2f" stroke-width="1.9"/><path d="M12.5 0.3V7M16.5 0.3V7M10 2.2H19M10 5.2H19" fill="none" stroke="#2f9a2f" stroke-width="1.7"/></svg>
<div class="tr" style="left:134px;top:553.5px;">ProductPriceChangedIntegrationEventHandler.cs</div>
<svg style="left:59px;top:585px" width="9" height="9"><path d="M8.5 0.5V8.5H0.5Z" fill="#1e1e1e"/></svg>
<svg style="left:74px;top:585px" width="9" height="10"><path d="M2.2 4.5V3 C2.2 0.5 6.8 0.5 6.8 3V4.5" fill="none" stroke="#1f70c1" stroke-width="1.4"/><rect x="0.8" y="4.5" width="7.4" height="5" fill="#dbe8f6" stroke="#1f70c1" stroke-width="1.3"/></svg>
<svg style="left:86px;top:580px" width="20" height="17"><path d="M1 2.5 C1 1.5 1.5 1 2.5 1H7.5L9.5 3H17.5 C18.5 3 19 3.5 19 4.5V14.5 C19 15.5 18.5 16 17.5 16H2.5 C1.5 16 1 15.5 1 14.5Z" fill="#dcb67a" stroke="#c29a44" stroke-width="1.1"/><path d="M1.5 5H18.5" stroke="#c29a44" stroke-width="1"/></svg>
<div class="tr" style="left:112px;top:577.5px;">Migrations</div>
<svg style="left:82px;top:607px" width="8" height="12"><path d="M1 1L6.5 6L1 11Z" fill="none" stroke="#1e1e1e" stroke-width="1.5" stroke-linejoin="round"/></svg>
<svg style="left:96px;top:609px" width="9" height="10"><path d="M2.2 4.5V3 C2.2 0.5 6.8 0.5 6.8 3V4.5" fill="none" stroke="#1f70c1" stroke-width="1.4"/><rect x="0.8" y="4.5" width="7.4" height="5" fill="#dbe8f6" stroke="#1f70c1" stroke-width="1.3"/></svg>
<svg style="left:108px;top:609px" width="20" height="11"><path d="M8.2 1.9 C7.5 1.1 6.4 0.9 5.2 0.9 C2.6 0.9 1 2.8 1 5.3 C1 7.9 2.6 9.8 5.2 9.8 C6.4 9.8 7.5 9.5 8.2 8.8" fill="none" stroke="#2f9a2f" stroke-width="1.9"/><path d="M12.5 0.3V7M16.5 0.3V7M10 2.2H19M10 5.2H19" fill="none" stroke="#2f9a2f" stroke-width="1.7"/></svg>
<div class="tr" style="left:134px;top:601.5px;">20230925222606_Initial.cs</div>
<svg style="left:82px;top:631px" width="8" height="12"><path d="M1 1L6.5 6L1 11Z" fill="none" stroke="#1e1e1e" stroke-width="1.5" stroke-linejoin="round"/></svg>
<svg style="left:96px;top:633px" width="9" height="10"><path d="M2.2 4.5V3 C2.2 0.5 6.8 0.5 6.8 3V4.5" fill="none" stroke="#1f70c1" stroke-width="1.4"/><rect x="0.8" y="4.5" width="7.4" height="5" fill="#dbe8f6" stroke="#1f70c1" stroke-width="1.3"/></svg>
<svg style="left:108px;top:633px" width="20" height="11"><path d="M8.2 1.9 C7.5 1.1 6.4 0.9 5.2 0.9 C2.6 0.9 1 2.8 1 5.3 C1 7.9 2.6 9.8 5.2 9.8 C6.4 9.8 7.5 9.5 8.2 8.8" fill="none" stroke="#2f9a2f" stroke-width="1.9"/><path d="M12.5 0.3V7M16.5 0.3V7M10 2.2H19M10 5.2H19" fill="none" stroke="#2f9a2f" stroke-width="1.7"/></svg>
<div class="tr" style="left:134px;top:625.5px;">WebhooksContextModelSnapshot.cs</div>
<svg style="left:59px;top:657px" width="9" height="9"><path d="M8.5 0.5V8.5H0.5Z" fill="#1e1e1e"/></svg>
<svg style="left:74px;top:657px" width="9" height="10"><path d="M2.2 4.5V3 C2.2 0.5 6.8 0.5 6.8 3V4.5" fill="none" stroke="#1f70c1" stroke-width="1.4"/><rect x="0.8" y="4.5" width="7.4" height="5" fill="#dbe8f6" stroke="#1f70c1" stroke-width="1.3"/></svg>
<svg style="left:86px;top:652px" width="20" height="17"><path d="M1 2.5 C1 1.5 1.5 1 2.5 1H7.5L9.5 3H17.5 C18.5 3 19 3.5 19 4.5V14.5 C19 15.5 18.5 16 17.5 16H2.5 C1.5 16 1 15.5 1 14.5Z" fill="#dcb67a" stroke="#c29a44" stroke-width="1.1"/><path d="M1.5 5H18.5" stroke="#c29a44" stroke-width="1"/></svg>
<div class="tr" style="left:112px;top:649.5px;">Model</div>
<svg style="left:82px;top:679px" width="8" height="12"><path d="M1 1L6.5 6L1 11Z" fill="none" stroke="#1e1e1e" stroke-width="1.5" stroke-linejoin="round"/></svg>
<svg style="left:96px;top:682px" width="10" height="8"><path d="M0.8 3.5L3.5 6.5L9 1" fill="none" stroke="#c5303a" stroke-width="1.5"/></svg>
<svg style="left:108px;top:681px" width="20" height="11"><path d="M8.2 1.9 C7.5 1.1 6.4 0.9 5.2 0.9 C2.6 0.9 1 2.8 1 5.3 C1 7.9 2.6 9.8 5.2 9.8 C6.4 9.8 7.5 9.5 8.2 8.8" fill="none" stroke="#2f9a2f" stroke-width="1.9"/><path d="M12.5 0.3V7M16.5 0.3V7M10 2.2H19M10 5.2H19" fill="none" stroke="#2f9a2f" stroke-width="1.7"/></svg>
<div class="tr" style="left:134px;top:673.5px;">WebhookData.cs</div>
<svg style="left:82px;top:703px" width="8" height="12"><path d="M1 1L6.5 6L1 11Z" fill="none" stroke="#1e1e1e" stroke-width="1.5" stroke-linejoin="round"/></svg>
<svg style="left:96px;top:706px" width="10" height="8"><path d="M0.8 3.5L3.5 6.5L9 1" fill="none" stroke="#c5303a" stroke-width="1.5"/></svg>
<svg style="left:108px;top:705px" width="20" height="11"><path d="M8.2 1.9 C7.5 1.1 6.4 0.9 5.2 0.9 C2.6 0.9 1 2.8 1 5.3 C1 7.9 2.6 9.8 5.2 9.8 C6.4 9.8 7.5 9.5 8.2 8.8" fill="none" stroke="#2f9a2f" stroke-width="1.9"/><path d="M12.5 0.3V7M16.5 0.3V7M10 2.2H19M10 5.2H19" fill="none" stroke="#2f9a2f" stroke-width="1.7"/></svg>
<div class="tr" style="left:134px;top:697.5px;">WebhookSubscription.cs</div>
<svg style="left:82px;top:727px" width="8" height="12"><path d="M1 1L6.5 6L1 11Z" fill="none" stroke="#1e1e1e" stroke-width="1.5" stroke-linejoin="round"/></svg>
<svg style="left:96px;top:730px" width="10" height="8"><path d="M0.8 3.5L3.5 6.5L9 1" fill="none" stroke="#c5303a" stroke-width="1.5"/></svg>
<svg style="left:108px;top:729px" width="20" height="11"><path d="M8.2 1.9 C7.5 1.1 6.4 0.9 5.2 0.9 C2.6 0.9 1 2.8 1 5.3 C1 7.9 2.6 9.8 5.2 9.8 C6.4 9.8 7.5 9.5 8.2 8.8" fill="none" stroke="#2f9a2f" stroke-width="1.9"/><path d="M12.5 0.3V7M16.5 0.3V7M10 2.2H19M10 5.2H19" fill="none" stroke="#2f9a2f" stroke-width="1.7"/></svg>
<div class="tr" style="left:134px;top:721.5px;">WebhookSubscriptionRequest.cs</div>
</div>
<div style="position:absolute;left:1440px;top:728px;width:423px;height:28px;border:2.6px solid #ff3032;border-radius:3px;box-sizing:border-box"></div>
<svg style="left:1865px;top:187px" width="10" height="6"><path d="M0 6L5 0L10 6Z" fill="#868999"/></svg>
<div style="position:absolute;left:1864px;top:438px;width:11px;height:359px;background:#c2c3c9"></div>
<svg style="left:1865px;top:902px" width="10" height="6"><path d="M0 0L5 6L10 0Z" fill="#868999"/></svg>
<svg style="left:1389px;top:921px" width="7" height="10"><path d="M7 0L0 5L7 10Z" fill="#868999"/></svg>
<div style="position:absolute;left:1402px;top:920px;width:368px;height:10.5px;background:#c2c3c9"></div>
<svg style="left:1846px;top:921px" width="7" height="10"><path d="M0 0L7 5L0 10Z" fill="#868999"/></svg>
<div style="position:absolute;left:1859px;top:918px;width:21px;height:17px;background:#eeeef2"></div>
<div style="position:absolute;left:1380px;top:935px;width:501px;height:1px;background:#cccedb"></div>
<div style="position:absolute;left:1380px;top:935px;width:149px;height:26px;background:#f5f5f5;border:1px solid #cccedb;border-top:none;box-sizing:border-box"></div>
<div style="position:absolute;left:1528px;top:935px;width:353px;height:26px;background:#eeeef2"></div>
<div style="position:absolute;left:1381px;top:935px;width:147px;height:1px;background:#f5f5f5"></div>
<div style="position:absolute;left:1387px;top:938px;white-space:pre;font-size:15px;line-height:22px;color:#0e70c0;"><span style="font-size:15px">解决方案资源管理器</span></div>
<div style="position:absolute;left:1536px;top:938px;white-space:pre;font-size:16px;line-height:22px;color:#1e1e1e;">Git <span style="font-size:15px">更改</span></div>
<div style="position:absolute;left:1882px;top:93px;width:32px;height:20px;transform:rotate(90deg);transform-origin:16px 10px;top:93px;font-size:15px;line-height:20px;color:#1e1e1e;white-space:pre">属性</div>
<div style="position:absolute;left:1912px;top:88px;width:8px;height:30px;background:#cccedb"></div>
<div style="position:absolute;left:0;top:0;width:1920px;height:1030px;overflow:hidden;pointer-events:none"><div style="position:absolute;left:9px;top:36.0px;width:80px;height:40px;line-height:40px;text-align:center;font-family:'Liberation Serif',serif;font-size:31px;color:rgba(255,255,255,0.88);transform:rotate(-44deg);white-space:pre;-webkit-text-stroke:0.3px rgba(255,255,255,0.88)">peng</div><div style="position:absolute;left:171px;top:36.0px;width:80px;height:40px;line-height:40px;text-align:center;font-family:'Liberation Serif',serif;font-size:31px;color:rgba(255,255,255,0.88);transform:rotate(-44deg);white-space:pre;-webkit-text-stroke:0.3px rgba(255,255,255,0.88)">peng</div><div style="position:absolute;left:333px;top:36.0px;width:80px;height:40px;line-height:40px;text-align:center;font-family:'Liberation Serif',serif;font-size:31px;color:rgba(255,255,255,0.88);transform:rotate(-44deg);white-space:pre;-webkit-text-stroke:0.3px rgba(255,255,255,0.88)">peng</div><div style="position:absolute;left:495px;top:36.0px;width:80px;height:40px;line-height:40px;text-align:center;font-family:'Liberation Serif',serif;font-size:31px;color:rgba(255,255,255,0.88);transform:rotate(-44deg);white-space:pre;-webkit-text-stroke:0.3px rgba(255,255,255,0.88)">peng</div><div style="position:absolute;left:657px;top:36.0px;width:80px;height:40px;line-height:40px;text-align:center;font-family:'Liberation Serif',serif;font-size:31px;color:rgba(255,255,255,0.88);transform:rotate(-44deg);white-space:pre;-webkit-text-stroke:0.3px rgba(255,255,255,0.88)">peng</div><div style="position:absolute;left:819px;top:36.0px;width:80px;height:40px;line-height:40px;text-align:center;font-family:'Liberation Serif',serif;font-size:31px;color:rgba(255,255,255,0.88);transform:rotate(-44deg);white-space:pre;-webkit-text-stroke:0.3px rgba(255,255,255,0.88)">peng</div><div style="position:absolute;left:981px;top:36.0px;width:80px;height:40px;line-height:40px;text-align:center;font-family:'Liberation Serif',serif;font-size:31px;color:rgba(255,255,255,0.88);transform:rotate(-44deg);white-space:pre;-webkit-text-stroke:0.3px rgba(255,255,255,0.88)">peng</div><div style="position:absolute;left:1143px;top:36.0px;width:80px;height:40px;line-height:40px;text-align:center;font-family:'Liberation Serif',serif;font-size:31px;color:rgba(255,255,255,0.88);transform:rotate(-44deg);white-space:pre;-webkit-text-stroke:0.3px rgba(255,255,255,0.88)">peng</div><div style="position:absolute;left:1305px;top:36.0px;width:80px;height:40px;line-height:40px;text-align:center;font-family:'Liberation Serif',serif;font-size:31px;color:rgba(255,255,255,0.88);transform:rotate(-44deg);white-space:pre;-webkit-text-stroke:0.3px rgba(255,255,255,0.88)">peng</div><div style="position:absolute;left:1467px;top:36.0px;width:80px;height:40px;line-height:40px;text-align:center;font-family:'Liberation Serif',serif;font-size:31px;color:rgba(255,255,255,0.88);transform:rotate(-44deg);white-space:pre;-webkit-text-stroke:0.3px rgba(255,255,255,0.88)">peng</div><div style="position:absolute;left:1629px;top:36.0px;width:80px;height:40px;line-height:40px;text-align:center;font-family:'Liberation Serif',serif;font-size:31px;color:rgba(255,255,255,0.88);transform:rotate(-44deg);white-space:pre;-webkit-text-stroke:0.3px rgba(255,255,255,0.88)">peng</div><div style="position:absolute;left:1791px;top:36.0px;width:80px;height:40px;line-height:40px;text-align:center;font-family:'Liberation Serif',serif;font-size:31px;color:rgba(255,255,255,0.88);transform:rotate(-44deg);white-space:pre;-webkit-text-stroke:0.3px rgba(255,255,255,0.88)">peng</div><div style="position:absolute;left:9px;top:196.4px;width:80px;height:40px;line-height:40px;text-align:center;font-family:'Liberation Serif',serif;font-size:31px;color:rgba(255,255,255,0.88);transform:rotate(-44deg);white-space:pre;-webkit-text-stroke:0.3px rgba(255,255,255,0.88)">peng</div><div style="position:absolute;left:171px;top:196.4px;width:80px;height:40px;line-height:40px;text-align:center;font-family:'Liberation Serif',serif;font-size:31px;color:rgba(255,255,255,0.88);transform:rotate(-44deg);white-space:pre;-webkit-text-stroke:0.3px rgba(255,255,255,0.88)">peng</div><div style="position:absolute;left:333px;top:196.4px;width:80px;height:40px;line-height:40px;text-align:center;font-family:'Liberation Serif',serif;font-size:31px;color:rgba(255,255,255,0.88);transform:rotate(-44deg);white-space:pre;-webkit-text-stroke:0.3px rgba(255,255,255,0.88)">peng</div><div style="position:absolute;left:495px;top:196.4px;width:80px;height:40px;line-height:40px;text-align:center;font-family:'Liberation Serif',serif;font-size:31px;color:rgba(255,255,255,0.88);transform:rotate(-44deg);white-space:pre;-webkit-text-stroke:0.3px rgba(255,255,255,0.88)">peng</div><div style="position:absolute;left:657px;top:196.4px;width:80px;height:40px;line-height:40px;text-align:center;font-family:'Liberation Serif',serif;font-size:31px;color:rgba(255,255,255,0.88);transform:rotate(-44deg);white-space:pre;-webkit-text-stroke:0.3px rgba(255,255,255,0.88)">peng</div><div style="position:absolute;left:819px;top:196.4px;width:80px;height:40px;line-height:40px;text-align:center;font-family:'Liberation Serif',serif;font-size:31px;color:rgba(255,255,255,0.88);transform:rotate(-44deg);white-space:pre;-webkit-text-stroke:0.3px rgba(255,255,255,0.88)">peng</div><div style="position:absolute;left:981px;top:196.4px;width:80px;height:40px;line-height:40px;text-align:center;font-family:'Liberation Serif',serif;font-size:31px;color:rgba(255,255,255,0.88);transform:rotate(-44deg);white-space:pre;-webkit-text-stroke:0.3px rgba(255,255,255,0.88)">peng</div><div style="position:absolute;left:1143px;top:196.4px;width:80px;height:40px;line-height:40px;text-align:center;font-family:'Liberation Serif',serif;font-size:31px;color:rgba(255,255,255,0.88);transform:rotate(-44deg);white-space:pre;-webkit-text-stroke:0.3px rgba(255,255,255,0.88)">peng</div><div style="position:absolute;left:1305px;top:196.4px;width:80px;height:40px;line-height:40px;text-align:center;font-family:'Liberation Serif',serif;font-size:31px;color:rgba(255,255,255,0.88);transform:rotate(-44deg);white-space:pre;-webkit-text-stroke:0.3px rgba(255,255,255,0.88)">peng</div><div style="position:absolute;left:1467px;top:196.4px;width:80px;height:40px;line-height:40px;text-align:center;font-family:'Liberation Serif',serif;font-size:31px;color:rgba(255,255,255,0.88);transform:rotate(-44deg);white-space:pre;-webkit-text-stroke:0.3px rgba(255,255,255,0.88)">peng</div><div style="position:absolute;left:1629px;top:196.4px;width:80px;height:40px;line-height:40px;text-align:center;font-family:'Liberation Serif',serif;font-size:31px;color:rgba(255,255,255,0.88);transform:rotate(-44deg);white-space:pre;-webkit-text-stroke:0.3px rgba(255,255,255,0.88)">peng</div><div style="position:absolute;left:1791px;top:196.4px;width:80px;height:40px;line-height:40px;text-align:center;font-family:'Liberation Serif',serif;font-size:31px;color:rgba(255,255,255,0.88);transform:rotate(-44deg);white-space:pre;-webkit-text-stroke:0.3px rgba(255,255,255,0.88)">peng</div><div style="position:absolute;left:9px;top:356.8px;width:80px;height:40px;line-height:40px;text-align:center;font-family:'Liberation Serif',serif;font-size:31px;color:rgba(255,255,255,0.88);transform:rotate(-44deg);white-space:pre;-webkit-text-stroke:0.3px rgba(255,255,255,0.88)">peng</div><div style="position:absolute;left:171px;top:356.8px;width:80px;height:40px;line-height:40px;text-align:center;font-family:'Liberation Serif',serif;font-size:31px;color:rgba(255,255,255,0.88);transform:rotate(-44deg);white-space:pre;-webkit-text-stroke:0.3px rgba(255,255,255,0.88)">peng</div><div style="position:absolute;left:333px;top:356.8px;width:80px;height:40px;line-height:40px;text-align:center;font-family:'Liberation Serif',serif;font-size:31px;color:rgba(255,255,255,0.88);transform:rotate(-44deg);white-space:pre;-webkit-text-stroke:0.3px rgba(255,255,255,0.88)">peng</div><div style="position:absolute;left:495px;top:356.8px;width:80px;height:40px;line-height:40px;text-align:center;font-family:'Liberation Serif',serif;font-size:31px;color:rgba(255,255,255,0.88);transform:rotate(-44deg);white-space:pre;-webkit-text-stroke:0.3px rgba(255,255,255,0.88)">peng</div><div style="position:absolute;left:657px;top:356.8px;width:80px;height:40px;line-height:40px;text-align:center;font-family:'Liberation Serif',serif;font-size:31px;color:rgba(255,255,255,0.88);transform:rotate(-44deg);white-space:pre;-webkit-text-stroke:0.3px rgba(255,255,255,0.88)">peng</div><div style="position:absolute;left:819px;top:356.8px;width:80px;height:40px;line-height:40px;text-align:center;font-family:'Liberation Serif',serif;font-size:31px;color:rgba(255,255,255,0.88);transform:rotate(-44deg);white-space:pre;-webkit-text-stroke:0.3px rgba(255,255,255,0.88)">peng</div><div style="position:absolute;left:981px;top:356.8px;width:80px;height:40px;line-height:40px;text-align:center;font-family:'Liberation Serif',serif;font-size:31px;color:rgba(255,255,255,0.88);transform:rotate(-44deg);white-space:pre;-webkit-text-stroke:0.3px rgba(255,255,255,0.88)">peng</div><div style="position:absolute;left:1143px;top:356.8px;width:80px;height:40px;line-height:40px;text-align:center;font-family:'Liberation Serif',serif;font-size:31px;color:rgba(255,255,255,0.88);transform:rotate(-44deg);white-space:pre;-webkit-text-stroke:0.3px rgba(255,255,255,0.88)">peng</div><div style="position:absolute;left:1305px;top:356.8px;width:80px;height:40px;line-height:40px;text-align:center;font-family:'Liberation Serif',serif;font-size:31px;color:rgba(255,255,255,0.88);transform:rotate(-44deg);white-space:pre;-webkit-text-stroke:0.3px rgba(255,255,255,0.88)">peng</div><div style="position:absolute;left:1467px;top:356.8px;width:80px;height:40px;line-height:40px;text-align:center;font-family:'Liberation Serif',serif;font-size:31px;color:rgba(255,255,255,0.88);transform:rotate(-44deg);white-space:pre;-webkit-text-stroke:0.3px rgba(255,255,255,0.88)">peng</div><div style="position:absolute;left:1629px;top:356.8px;width:80px;height:40px;line-height:40px;text-align:center;font-family:'Liberation Serif',serif;font-size:31px;color:rgba(255,255,255,0.88);transform:rotate(-44deg);white-space:pre;-webkit-text-stroke:0.3px rgba(255,255,255,0.88)">peng</div><div style="position:absolute;left:1791px;top:356.8px;width:80px;height:40px;line-height:40px;text-align:center;font-family:'Liberation Serif',serif;font-size:31px;color:rgba(255,255,255,0.88);transform:rotate(-44deg);white-space:pre;-webkit-text-stroke:0.3px rgba(255,255,255,0.88)">peng</div><div style="position:absolute;left:9px;top:517.2px;width:80px;height:40px;line-height:40px;text-align:center;font-family:'Liberation Serif',serif;font-size:31px;color:rgba(255,255,255,0.88);transform:rotate(-44deg);white-space:pre;-webkit-text-stroke:0.3px rgba(255,255,255,0.88)">peng</div><div style="position:absolute;left:171px;top:517.2px;width:80px;height:40px;line-height:40px;text-align:center;font-family:'Liberation Serif',serif;font-size:31px;color:rgba(255,255,255,0.88);transform:rotate(-44deg);white-space:pre;-webkit-text-stroke:0.3px rgba(255,255,255,0.88)">peng</div><div style="position:absolute;left:333px;top:517.2px;width:80px;height:40px;line-height:40px;text-align:center;font-family:'Liberation Serif',serif;font-size:31px;color:rgba(255,255,255,0.88);transform:rotate(-44deg);white-space:pre;-webkit-text-stroke:0.3px rgba(255,255,255,0.88)">peng</div><div style="position:absolute;left:495px;top:517.2px;width:80px;height:40px;line-height:40px;text-align:center;font-family:'Liberation Serif',serif;font-size:31px;color:rgba(255,255,255,0.88);transform:rotate(-44deg);white-space:pre;-webkit-text-stroke:0.3px rgba(255,255,255,0.88)">peng</div><div style="position:absolute;left:657px;top:517.2px;width:80px;height:40px;line-height:40px;text-align:center;font-family:'Liberation Serif',serif;font-size:31px;color:rgba(255,255,255,0.88);transform:rotate(-44deg);white-space:pre;-webkit-text-stroke:0.3px rgba(255,255,255,0.88)">peng</div><div style="position:absolute;left:819px;top:517.2px;width:80px;height:40px;line-height:40px;text-align:center;font-family:'Liberation Serif',serif;font-size:31px;color:rgba(255,255,255,0.88);transform:rotate(-44deg);white-space:pre;-webkit-text-stroke:0.3px rgba(255,255,255,0.88)">peng</div><div style="position:absolute;left:981px;top:517.2px;width:80px;height:40px;line-height:40px;text-align:center;font-family:'Liberation Serif',serif;font-size:31px;color:rgba(255,255,255,0.88);transform:rotate(-44deg);white-space:pre;-webkit-text-stroke:0.3px rgba(255,255,255,0.88)">peng</div><div style="position:absolute;left:1143px;top:517.2px;width:80px;height:40px;line-height:40px;text-align:center;font-family:'Liberation Serif',serif;font-size:31px;color:rgba(255,255,255,0.88);transform:rotate(-44deg);white-space:pre;-webkit-text-stroke:0.3px rgba(255,255,255,0.88)">peng</div><div style="position:absolute;left:1305px;top:517.2px;width:80px;height:40px;line-height:40px;text-align:center;font-family:'Liberation Serif',serif;font-size:31px;color:rgba(255,255,255,0.88);transform:rotate(-44deg);white-space:pre;-webkit-text-stroke:0.3px rgba(255,255,255,0.88)">peng</div><div style="position:absolute;left:1467px;top:517.2px;width:80px;height:40px;line-height:40px;text-align:center;font-family:'Liberation Serif',serif;font-size:31px;color:rgba(255,255,255,0.88);transform:rotate(-44deg);white-space:pre;-webkit-text-stroke:0.3px rgba(255,255,255,0.88)">peng</div><div style="position:absolute;left:1629px;top:517.2px;width:80px;height:40px;line-height:40px;text-align:center;font-family:'Liberation Serif',serif;font-size:31px;color:rgba(255,255,255,0.88);transform:rotate(-44deg);white-space:pre;-webkit-text-stroke:0.3px rgba(255,255,255,0.88)">peng</div><div style="position:absolute;left:1791px;top:517.2px;width:80px;height:40px;line-height:40px;text-align:center;font-family:'Liberation Serif',serif;font-size:31px;color:rgba(255,255,255,0.88);transform:rotate(-44deg);white-space:pre;-webkit-text-stroke:0.3px rgba(255,255,255,0.88)">peng</div><div style="position:absolute;left:9px;top:677.6px;width:80px;height:40px;line-height:40px;text-align:center;font-family:'Liberation Serif',serif;font-size:31px;color:rgba(255,255,255,0.88);transform:rotate(-44deg);white-space:pre;-webkit-text-stroke:0.3px rgba(255,255,255,0.88)">peng</div><div style="position:absolute;left:171px;top:677.6px;width:80px;height:40px;line-height:40px;text-align:center;font-family:'Liberation Serif',serif;font-size:31px;color:rgba(255,255,255,0.88);transform:rotate(-44deg);white-space:pre;-webkit-text-stroke:0.3px rgba(255,255,255,0.88)">peng</div><div style="position:absolute;left:333px;top:677.6px;width:80px;height:40px;line-height:40px;text-align:center;font-family:'Liberation Serif',serif;font-size:31px;color:rgba(255,255,255,0.88);transform:rotate(-44deg);white-space:pre;-webkit-text-stroke:0.3px rgba(255,255,255,0.88)">peng</div><div style="position:absolute;left:495px;top:677.6px;width:80px;height:40px;line-height:40px;text-align:center;font-family:'Liberation Serif',serif;font-size:31px;color:rgba(255,255,255,0.88);transform:rotate(-44deg);white-space:pre;-webkit-text-stroke:0.3px rgba(255,255,255,0.88)">peng</div><div style="position:absolute;left:657px;top:677.6px;width:80px;height:40px;line-height:40px;text-align:center;font-family:'Liberation Serif',serif;font-size:31px;color:rgba(255,255,255,0.88);transform:rotate(-44deg);white-space:pre;-webkit-text-stroke:0.3px rgba(255,255,255,0.88)">peng</div><div style="position:absolute;left:819px;top:677.6px;width:80px;height:40px;line-height:40px;text-align:center;font-family:'Liberation Serif',serif;font-size:31px;color:rgba(255,255,255,0.88);transform:rotate(-44deg);white-space:pre;-webkit-text-stroke:0.3px rgba(255,255,255,0.88)">peng</div><div style="position:absolute;left:981px;top:677.6px;width:80px;height:40px;line-height:40px;text-align:center;font-family:'Liberation Serif',serif;font-size:31px;color:rgba(255,255,255,0.88);transform:rotate(-44deg);white-space:pre;-webkit-text-stroke:0.3px rgba(255,255,255,0.88)">peng</div><div style="position:absolute;left:1143px;top:677.6px;width:80px;height:40px;line-height:40px;text-align:center;font-family:'Liberation Serif',serif;font-size:31px;color:rgba(255,255,255,0.88);transform:rotate(-44deg);white-space:pre;-webkit-text-stroke:0.3px rgba(255,255,255,0.88)">peng</div><div style="position:absolute;left:1305px;top:677.6px;width:80px;height:40px;line-height:40px;text-align:center;font-family:'Liberation Serif',serif;font-size:31px;color:rgba(255,255,255,0.88);transform:rotate(-44deg);white-space:pre;-webkit-text-stroke:0.3px rgba(255,255,255,0.88)">peng</div><div style="position:absolute;left:1467px;top:677.6px;width:80px;height:40px;line-height:40px;text-align:center;font-family:'Liberation Serif',serif;font-size:31px;color:rgba(255,255,255,0.88);transform:rotate(-44deg);white-space:pre;-webkit-text-stroke:0.3px rgba(255,255,255,0.88)">peng</div><div style="position:absolute;left:1629px;top:677.6px;width:80px;height:40px;line-height:40px;text-align:center;font-family:'Liberation Serif',serif;font-size:31px;color:rgba(255,255,255,0.88);transform:rotate(-44deg);white-space:pre;-webkit-text-stroke:0.3px rgba(255,255,255,0.88)">peng</div><div style="position:absolute;left:1791px;top:677.6px;width:80px;height:40px;line-height:40px;text-align:center;font-family:'Liberation Serif',serif;font-size:31px;color:rgba(255,255,255,0.88);transform:rotate(-44deg);white-space:pre;-webkit-text-stroke:0.3px rgba(255,255,255,0.88)">peng</div><div style="position:absolute;left:9px;top:838.0px;width:80px;height:40px;line-height:40px;text-align:center;font-family:'Liberation Serif',serif;font-size:31px;color:rgba(255,255,255,0.88);transform:rotate(-44deg);white-space:pre;-webkit-text-stroke:0.3px rgba(255,255,255,0.88)">peng</div><div style="position:absolute;left:171px;top:838.0px;width:80px;height:40px;line-height:40px;text-align:center;font-family:'Liberation Serif',serif;font-size:31px;color:rgba(255,255,255,0.88);transform:rotate(-44deg);white-space:pre;-webkit-text-stroke:0.3px rgba(255,255,255,0.88)">peng</div><div style="position:absolute;left:333px;top:838.0px;width:80px;height:40px;line-height:40px;text-align:center;font-family:'Liberation Serif',serif;font-size:31px;color:rgba(255,255,255,0.88);transform:rotate(-44deg);white-space:pre;-webkit-text-stroke:0.3px rgba(255,255,255,0.88)">peng</div><div style="position:absolute;left:495px;top:838.0px;width:80px;height:40px;line-height:40px;text-align:center;font-family:'Liberation Serif',serif;font-size:31px;color:rgba(255,255,255,0.88);transform:rotate(-44deg);white-space:pre;-webkit-text-stroke:0.3px rgba(255,255,255,0.88)">peng</div><div style="position:absolute;left:657px;top:838.0px;width:80px;height:40px;line-height:40px;text-align:center;font-family:'Liberation Serif',serif;font-size:31px;color:rgba(255,255,255,0.88);transform:rotate(-44deg);white-space:pre;-webkit-text-stroke:0.3px rgba(255,255,255,0.88)">peng</div><div style="position:absolute;left:819px;top:838.0px;width:80px;height:40px;line-height:40px;text-align:center;font-family:'Liberation Serif',serif;font-size:31px;color:rgba(255,255,255,0.88);transform:rotate(-44deg);white-space:pre;-webkit-text-stroke:0.3px rgba(255,255,255,0.88)">peng</div><div style="position:absolute;left:981px;top:838.0px;width:80px;height:40px;line-height:40px;text-align:center;font-family:'Liberation Serif',serif;font-size:31px;color:rgba(255,255,255,0.88);transform:rotate(-44deg);white-space:pre;-webkit-text-stroke:0.3px rgba(255,255,255,0.88)">peng</div><div style="position:absolute;left:1143px;top:838.0px;width:80px;height:40px;line-height:40px;text-align:center;font-family:'Liberation Serif',serif;font-size:31px;color:rgba(255,255,255,0.88);transform:rotate(-44deg);white-space:pre;-webkit-text-stroke:0.3px rgba(255,255,255,0.88)">peng</div><div style="position:absolute;left:1305px;top:838.0px;width:80px;height:40px;line-height:40px;text-align:center;font-family:'Liberation Serif',serif;font-size:31px;color:rgba(255,255,255,0.88);transform:rotate(-44deg);white-space:pre;-webkit-text-stroke:0.3px rgba(255,255,255,0.88)">peng</div><div style="position:absolute;left:1467px;top:838.0px;width:80px;height:40px;line-height:40px;text-align:center;font-family:'Liberation Serif',serif;font-size:31px;color:rgba(255,255,255,0.88);transform:rotate(-44deg);white-space:pre;-webkit-text-stroke:0.3px rgba(255,255,255,0.88)">peng</div><div style="position:absolute;left:1629px;top:838.0px;width:80px;height:40px;line-height:40px;text-align:center;font-family:'Liberation Serif',serif;font-size:31px;color:rgba(255,255,255,0.88);transform:rotate(-44deg);white-space:pre;-webkit-text-stroke:0.3px rgba(255,255,255,0.88)">peng</div><div style="position:absolute;left:1791px;top:838.0px;width:80px;height:40px;line-height:40px;text-align:center;font-family:'Liberation Serif',serif;font-size:31px;color:rgba(255,255,255,0.88);transform:rotate(-44deg);white-space:pre;-webkit-text-stroke:0.3px rgba(255,255,255,0.88)">peng</div><div style="position:absolute;left:9px;top:998.4000000000001px;width:80px;height:40px;line-height:40px;text-align:center;font-family:'Liberation Serif',serif;font-size:31px;color:rgba(255,255,255,0.88);transform:rotate(-44deg);white-space:pre;-webkit-text-stroke:0.3px rgba(255,255,255,0.88)">peng</div><div style="position:absolute;left:171px;top:998.4000000000001px;width:80px;height:40px;line-height:40px;text-align:center;font-family:'Liberation Serif',serif;font-size:31px;color:rgba(255,255,255,0.88);transform:rotate(-44deg);white-space:pre;-webkit-text-stroke:0.3px rgba(255,255,255,0.88)">peng</div><div style="position:absolute;left:333px;top:998.4000000000001px;width:80px;height:40px;line-height:40px;text-align:center;font-family:'Liberation Serif',serif;font-size:31px;color:rgba(255,255,255,0.88);transform:rotate(-44deg);white-space:pre;-webkit-text-stroke:0.3px rgba(255,255,255,0.88)">peng</div><div style="position:absolute;left:495px;top:998.4000000000001px;width:80px;height:40px;line-height:40px;text-align:center;font-family:'Liberation Serif',serif;font-size:31px;color:rgba(255,255,255,0.88);transform:rotate(-44deg);white-space:pre;-webkit-text-stroke:0.3px rgba(255,255,255,0.88)">peng</div><div style="position:absolute;left:657px;top:998.4000000000001px;width:80px;height:40px;line-height:40px;text-align:center;font-family:'Liberation Serif',serif;font-size:31px;color:rgba(255,255,255,0.88);transform:rotate(-44deg);white-space:pre;-webkit-text-stroke:0.3px rgba(255,255,255,0.88)">peng</div><div style="position:absolute;left:819px;top:998.4000000000001px;width:80px;height:40px;line-height:40px;text-align:center;font-family:'Liberation Serif',serif;font-size:31px;color:rgba(255,255,255,0.88);transform:rotate(-44deg);white-space:pre;-webkit-text-stroke:0.3px rgba(255,255,255,0.88)">peng</div><div style="position:absolute;left:981px;top:998.4000000000001px;width:80px;height:40px;line-height:40px;text-align:center;font-family:'Liberation Serif',serif;font-size:31px;color:rgba(255,255,255,0.88);transform:rotate(-44deg);white-space:pre;-webkit-text-stroke:0.3px rgba(255,255,255,0.88)">peng</div><div style="position:absolute;left:1143px;top:998.4000000000001px;width:80px;height:40px;line-height:40px;text-align:center;font-family:'Liberation Serif',serif;font-size:31px;color:rgba(255,255,255,0.88);transform:rotate(-44deg);white-space:pre;-webkit-text-stroke:0.3px rgba(255,255,255,0.88)">peng</div><div style="position:absolute;left:1305px;top:998.4000000000001px;width:80px;height:40px;line-height:40px;text-align:center;font-family:'Liberation Serif',serif;font-size:31px;color:rgba(255,255,255,0.88);transform:rotate(-44deg);white-space:pre;-webkit-text-stroke:0.3px rgba(255,255,255,0.88)">peng</div><div style="position:absolute;left:1467px;top:998.4000000000001px;width:80px;height:40px;line-height:40px;text-align:center;font-family:'Liberation Serif',serif;font-size:31px;color:rgba(255,255,255,0.88);transform:rotate(-44deg);white-space:pre;-webkit-text-stroke:0.3px rgba(255,255,255,0.88)">peng</div><div style="position:absolute;left:1629px;top:998.4000000000001px;width:80px;height:40px;line-height:40px;text-align:center;font-family:'Liberation Serif',serif;font-size:31px;color:rgba(255,255,255,0.88);transform:rotate(-44deg);white-space:pre;-webkit-text-stroke:0.3px rgba(255,255,255,0.88)">peng</div><div style="position:absolute;left:1791px;top:998.4000000000001px;width:80px;height:40px;line-height:40px;text-align:center;font-family:'Liberation Serif',serif;font-size:31px;color:rgba(255,255,255,0.88);transform:rotate(-44deg);white-space:pre;-webkit-text-stroke:0.3px rgba(255,255,255,0.88)">peng</div></div>
<div style="position:absolute;left:139px;top:161px;width:1032px;height:223px;border:3px solid #ff3032;border-radius:3px;box-sizing:border-box"></div>
<div style="position:absolute;left:202.5px;top:691.5px;width:1008.5px;height:193.5px;border:2.6px solid #ff3032;border-radius:3px;box-sizing:border-box"></div>
</body></html>
